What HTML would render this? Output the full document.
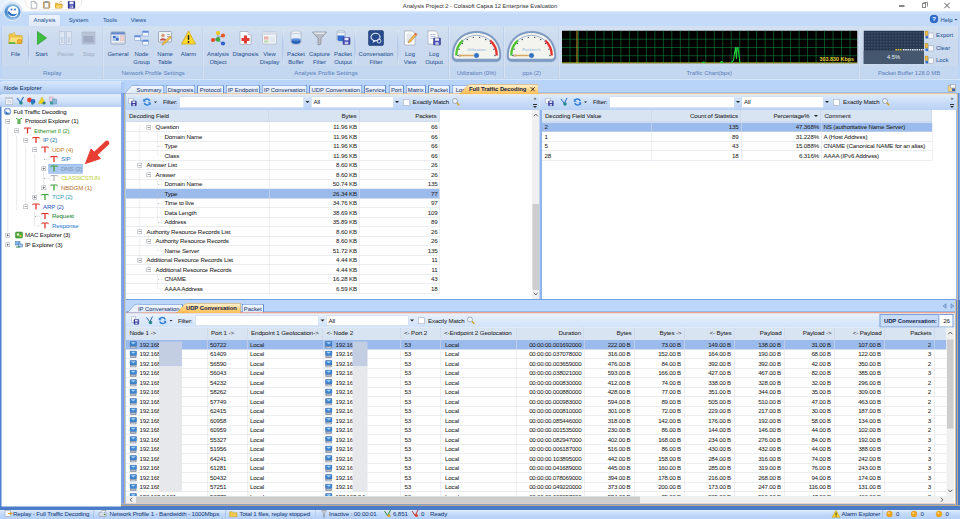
<!DOCTYPE html>
<html lang="en"><head><meta charset="utf-8"><title>Analysis Project 2 - Colasoft Capsa 12 Enterprise Evaluation</title>
<style>
html,body{margin:0;padding:0;background:#fff;}
body{width:960px;height:519px;overflow:hidden;position:relative;}
#app{position:absolute;left:0;top:0;width:1920px;height:1038px;transform:scale(.5);transform-origin:0 0;background:#bfdbff;overflow:hidden;
 font-family:"Liberation Sans",sans-serif;font-size:11.7px;color:#1e1e1e;-webkit-text-stroke:.08px;}
#app div,#app svg{position:absolute;box-sizing:border-box;}
.t{white-space:nowrap;overflow:visible;font-size:12.3px;letter-spacing:-.28px;}
.c{text-align:center;}
.r{text-align:right;}
.b{font-weight:bold;}
.rl{color:#2a5596;text-align:center;font-size:11.8px;letter-spacing:0;}
.gl{color:#5d84bd;text-align:center;font-size:11.8px;letter-spacing:0;}
.grp{border:1px solid #a9c3e6;border-radius:5px;background:linear-gradient(#dbe7f6 0%,#cfdff2 22%,#c6d8ef 60%,#cbdcf1 100%);overflow:hidden;}
.grp .lab{left:0;right:0;bottom:0;height:26px;background:#c0d5f0;}
.vsep{width:2px;background:linear-gradient(rgba(160,188,226,0),#9fbbe2 40%,#9fbbe2 70%,rgba(160,188,226,0));border-right:1px solid rgba(255,255,255,.7);}
.hdr{background:#d9e4f3;border-bottom:1px solid #c4d2e6;}
.hc{border-right:1px solid #c3d0e4;color:#1e1e1e;font-size:12.4px;letter-spacing:-.2px;}
.row{border-bottom:1px solid #d6dae1;}
.sel{background:#9bbbec;}
.n{letter-spacing:-.45px;}
.tb{background:linear-gradient(#dfebfa,#c7dbf7 55%,#b9d2f5);}
.inp{background:#fff;border:1px solid #b5cbe8;}
.dtab{font-size:11.7px;border:2px solid #5f8bd0;border-bottom:none;border-radius:4px 4px 0 0;background:linear-gradient(#f4f8fd,#dbe7f7);color:#1f3f78;text-align:center;white-space:nowrap;}
.atab{border:1px solid #e0a040;border-bottom:none;border-radius:4px 4px 0 0;background:linear-gradient(#fff3d6,#ffd58a 50%,#ffbf55);color:#1a2d55;font-weight:bold;white-space:nowrap;}
.tr{white-space:nowrap;}
.exp{width:9px;height:9px;border:1px solid #9aa0a8;background:#fff;}
.exp:before{content:"";position:absolute;left:1px;top:3px;width:5px;height:1px;background:#444;}
.exp.p:after{content:"";position:absolute;left:3px;top:1px;width:1px;height:5px;background:#444;}
.sb{background:#f0f0f0;}
.th{background:#cdcdcd;}
.st{color:#1b3f7c;white-space:nowrap;}
</style></head>
<body>
<div id="app">

<!-- title bar -->
<div style="left:0px;top:0px;width:1920px;height:23px;background:#fff;"></div>
<div style="left:0px;top:0px;width:56px;height:23px;background:linear-gradient(90deg,#e4eefb,#fff);"></div>
<div class="t" style="left:660px;top:0px;width:600px;height:25px;line-height:25px;text-align:center;color:#3a3a3a;font-size:11.5px;letter-spacing:0;">Analysis Project 2 - Colasoft Capsa 12 Enterprise Evaluation</div>
<div style="left:1798px;top:11px;width:11px;height:2px;background:#111;"></div>
<div style="left:1844px;top:7px;width:8px;height:8px;border:1.5px solid #111;"></div>
<div style="left:1847px;top:5px;width:8px;height:8px;border:1.5px solid #111;border-left:none;border-bottom:none;"></div>
<svg style="left:1887px;top:4px" width="14" height="14" viewBox="0 0 14 14"><path d="M1.5 1.5L12.5 12.5M12.5 1.5L1.5 12.5" stroke="#333" stroke-width="1.6" fill="none"/></svg>
<div style="left:50px;top:-14px;width:114px;height:34px;border:1px solid #d9d2c6;border-radius:0 0 18px 18px;background:#fff;"></div>
<svg style="left:60px;top:1px" width="16" height="17" viewBox="0 0 16 17"><path d="M2.5 1.5h7l4 4v10h-11z" fill="#fff" stroke="#7d8794" stroke-width="1.2"/><path d="M9.5 1.5v4h4" fill="#dfe5ee" stroke="#7d8794" stroke-width="1"/></svg>
<svg style="left:85px;top:1px" width="17" height="17" viewBox="0 0 17 17"><rect x="1.5" y="2.5" width="13" height="13" rx="1.5" fill="#d9a95e" stroke="#9a6a2a"/><rect x="4" y="4.5" width="8" height="10" fill="#fff" stroke="#8c97a6" stroke-width=".8"/><rect x="5.5" y="1" width="5" height="3.5" rx="1" fill="#8a95a8"/></svg>
<svg style="left:109px;top:1px" width="17" height="17" viewBox="0 0 17 17"><path d="M1.5 5.5h5l1.5 1.5h7v8h-13.5z" fill="#f0c040" stroke="#b8860b"/><path d="M3 9h12.5l-1.5 6h-12.5z" fill="#ffd969" stroke="#c89a20" stroke-width=".8"/><path d="M10 4c1.500-2.500 4-2.500 5-.5" stroke="#c07020" fill="none" stroke-width="1.2"/></svg>
<svg style="left:135px;top:1px" width="16" height="17" viewBox="0 0 16 17"><rect x="1" y="1.500" width="14" height="14" rx="1" fill="#3a3ca8" stroke="#23246e"/><rect x="4" y="2" width="8" height="5.500" fill="#e8ecf8"/><rect x="4.500" y="10" width="7" height="5.500" fill="#c8cce8"/><rect x="6" y="11" width="2" height="3.500" fill="#3a3ca8"/></svg>
<!-- ribbon tabs -->
<div style="left:0px;top:23px;width:1920px;height:30px;background:linear-gradient(#d4e4fa 0,#c3dbf9 20%);"></div>
<div style="left:0px;top:52px;width:1920px;height:112px;background:linear-gradient(#c3daf9,#b9d4f9);"></div>
<div style="left:0px;top:157px;width:1920px;height:3px;background:#d6e6f9;"></div>
<div style="left:57px;top:28px;width:64px;height:26px;border:1px solid #9dbde8;border-bottom:none;border-radius:4px 4px 0 0;background:linear-gradient(#eef4fc,#dde8f7);"></div>
<div class="t" style="left:57px;top:28px;width:64px;height:24px;line-height:24px;text-align:center;color:#2a5596;font-size:11.8px;letter-spacing:0;">Analysis</div>
<div class="t" style="left:125px;top:28px;width:64px;height:24px;line-height:24px;text-align:center;color:#2a5596;font-size:11.8px;letter-spacing:0;">System</div>
<div class="t" style="left:190px;top:28px;width:60px;height:24px;line-height:24px;text-align:center;color:#2a5596;font-size:11.8px;letter-spacing:0;">Tools</div>
<div class="t" style="left:247px;top:28px;width:60px;height:24px;line-height:24px;text-align:center;color:#2a5596;font-size:11.8px;letter-spacing:0;">Views</div>
<svg style="left:3px;top:2px" width="44" height="44" viewBox="0 0 44 44"><defs><linearGradient id="lg1" x1="0" y1="0" x2="0" y2="1"><stop offset="0" stop-color="#8fc0e8"/><stop offset=".5" stop-color="#3f86c8"/><stop offset="1" stop-color="#9cc4ea"/></linearGradient></defs><circle cx="22" cy="22" r="19" fill="#dfeaf8" stroke="#c3d6ee" stroke-width="1.500"/><circle cx="22" cy="22" r="16" fill="url(#lg1)"/><circle cx="23" cy="21" r="11" fill="#fff"/><path d="M12 21a10.500 10.500 0 0 0 20 3a9 7 0 0 1-14 0a5 5 0 0 0-6-3z" fill="#2d6fc0"/><circle cx="20" cy="17" r="2" fill="#2d6fc0"/><circle cx="27" cy="17" r="2" fill="#2d6fc0"/></svg>
<svg style="left:1859px;top:29px" width="18" height="18" viewBox="0 0 18 18"><circle cx="9" cy="9" r="8" fill="#2f6fd0" stroke="#1b4a9c"/><text x="9" y="13.500" font-size="12" font-weight="bold" text-anchor="middle" fill="#fff" font-family="Liberation Sans,sans-serif">?</text></svg>
<div class="t" style="left:1881px;top:28px;width:30px;height:22px;line-height:22px;color:#2a5596;font-size:11.8px;letter-spacing:0;">Help</div>
<div style="left:1909px;top:38px;width:0px;height:0px;border:3px solid transparent;border-top:3px solid #1f4587;"></div>
<!-- ribbon groups -->
<div style="left:2px;top:52px;width:1916px;height:106px;background:linear-gradient(#d3e0f1 0%,#cbdaee 30%,#c9d9ee 100%);border:1px solid #b3cbea;border-top:none;border-radius:0 0 4px 4px;"></div>
<div style="left:3px;top:132px;width:1914px;height:25px;background:#c4d7f1;"></div>
<div class="t gl" style="left:4px;top:132px;width:201px;height:26px;line-height:26px;">Replay</div>
<div class="t gl" style="left:208px;top:132px;width:197px;height:26px;line-height:26px;">Network Profile Settings</div>
<div class="t gl" style="left:408px;top:132px;width:488px;height:26px;line-height:26px;">Analysis Profile Settings</div>
<div class="t gl" style="left:900px;top:132px;width:106px;height:26px;line-height:26px;">Utilization (0%)</div>
<div class="t gl" style="left:1010px;top:132px;width:107px;height:26px;line-height:26px;">pps (2)</div>
<div class="t gl" style="left:1120px;top:132px;width:597px;height:26px;line-height:26px;">Traffic Chart(bps)</div>
<div class="t gl" style="left:1720px;top:132px;width:196px;height:26px;line-height:26px;">Packet Buffer 128.0 MB</div>
<div style="left:205px;top:54px;width:3px;height:103px;background:#bdd0ea;border-right:1.5px solid #e9f0fa;"></div>
<div style="left:405px;top:54px;width:3px;height:103px;background:#bdd0ea;border-right:1.5px solid #e9f0fa;"></div>
<div style="left:896px;top:54px;width:3px;height:103px;background:#bdd0ea;border-right:1.5px solid #e9f0fa;"></div>
<div style="left:1006px;top:54px;width:3px;height:103px;background:#bdd0ea;border-right:1.5px solid #e9f0fa;"></div>
<div style="left:1117px;top:54px;width:3px;height:103px;background:#bdd0ea;border-right:1.5px solid #e9f0fa;"></div>
<div style="left:1717px;top:54px;width:3px;height:103px;background:#bdd0ea;border-right:1.5px solid #e9f0fa;"></div>
<div class="vsep" style="left:56px;top:60px;width:3px;height:68px;"></div>
<div class="vsep" style="left:565px;top:60px;width:3px;height:68px;"></div>
<div class="vsep" style="left:709px;top:60px;width:3px;height:68px;"></div>
<div class="vsep" style="left:795px;top:60px;width:3px;height:68px;"></div>
<div class="t rl" style="left:-9px;top:99px;width:80px;height:17px;line-height:17px;">File</div>
<div class="t rl" style="left:43px;top:99px;width:80px;height:17px;line-height:17px;">Start</div>
<div class="t rl" style="left:91px;top:99px;width:80px;height:17px;line-height:17px;color:#9fb0c8;">Pause</div>
<div class="t rl" style="left:137px;top:99px;width:80px;height:17px;line-height:17px;color:#9fb0c8;">Stop</div>
<div class="t rl" style="left:196px;top:99px;width:80px;height:17px;line-height:17px;">General</div>
<div class="t rl" style="left:243px;top:99px;width:80px;height:17px;line-height:17px;">Node</div>
<div class="t rl" style="left:243px;top:115px;width:80px;height:17px;line-height:17px;">Group</div>
<div class="t rl" style="left:290px;top:99px;width:80px;height:17px;line-height:17px;">Name</div>
<div class="t rl" style="left:290px;top:115px;width:80px;height:17px;line-height:17px;">Table</div>
<div class="t rl" style="left:337px;top:99px;width:80px;height:17px;line-height:17px;">Alarm</div>
<div class="t rl" style="left:396px;top:99px;width:80px;height:17px;line-height:17px;">Analysis</div>
<div class="t rl" style="left:396px;top:115px;width:80px;height:17px;line-height:17px;">Object</div>
<div class="t rl" style="left:451px;top:99px;width:80px;height:17px;line-height:17px;">Diagnosis</div>
<div class="t rl" style="left:499px;top:99px;width:80px;height:17px;line-height:17px;">View</div>
<div class="t rl" style="left:499px;top:115px;width:80px;height:17px;line-height:17px;">Display</div>
<div class="t rl" style="left:552px;top:99px;width:80px;height:17px;line-height:17px;">Packet</div>
<div class="t rl" style="left:552px;top:115px;width:80px;height:17px;line-height:17px;">Buffer</div>
<div class="t rl" style="left:599px;top:99px;width:80px;height:17px;line-height:17px;">Capture</div>
<div class="t rl" style="left:599px;top:115px;width:80px;height:17px;line-height:17px;">Filter</div>
<div class="t rl" style="left:646px;top:99px;width:80px;height:17px;line-height:17px;">Packet</div>
<div class="t rl" style="left:646px;top:115px;width:80px;height:17px;line-height:17px;">Output</div>
<div class="t rl" style="left:712px;top:99px;width:80px;height:17px;line-height:17px;">Conversation</div>
<div class="t rl" style="left:712px;top:115px;width:80px;height:17px;line-height:17px;">Filter</div>
<div class="t rl" style="left:780px;top:99px;width:80px;height:17px;line-height:17px;">Log</div>
<div class="t rl" style="left:780px;top:115px;width:80px;height:17px;line-height:17px;">View</div>
<div class="t rl" style="left:828px;top:99px;width:80px;height:17px;line-height:17px;">Log</div>
<div class="t rl" style="left:828px;top:115px;width:80px;height:17px;line-height:17px;">Output</div>
<svg style="left:15px;top:60px" width="32" height="32" viewBox="0 0 32 32"><path d="M3 8h10l3 3h13v16h-26z" fill="#f2c84b" stroke="#c79a22"/><path d="M5 14h25l-3 13h-25z" fill="#ffdf7a" stroke="#d2a52c"/><circle cx="24" cy="23" r="4.500" fill="#f0b030" stroke="#b87c10"/><rect x="2" y="24" width="14" height="4" rx="2" fill="#6fb24a"/><path d="M10 9l3-5 4 7" fill="#f6d878" stroke="#c79a22" stroke-width=".8"/></svg>
<svg style="left:67px;top:60px" width="32" height="32" viewBox="0 0 32 32"><path d="M8 3l18 13-18 13z" fill="#3fbf3f" stroke="#2a9a2f" stroke-width="1.500" stroke-linejoin="round"/></svg>
<svg style="left:115px;top:60px" width="32" height="32" viewBox="0 0 32 32"><rect x="4" y="3" width="10" height="26" fill="#dfe7f3" stroke="#a9b7cd"/><rect x="18" y="3" width="10" height="26" fill="#dfe7f3" stroke="#a9b7cd"/><rect x="6.500" y="14" width="5" height="12" fill="#c5d1e4"/><rect x="20.500" y="14" width="5" height="12" fill="#c5d1e4"/></svg>
<svg style="left:161px;top:60px" width="32" height="32" viewBox="0 0 32 32"><rect x="3" y="4" width="26" height="24" fill="#b9c4d6" stroke="#a3b0c6"/><rect x="6" y="12" width="20" height="13" fill="#9eabc2"/></svg>
<svg style="left:220px;top:60px" width="32" height="32" viewBox="0 0 32 32"><rect x="2" y="4" width="28" height="24" rx="1.500" fill="#f4f7fb" stroke="#7d8da8" stroke-width="1.500"/><rect x="2.500" y="4.500" width="27" height="4.500" fill="#5f86c8"/><rect x="5" y="11" width="13" height="11" fill="#a9c6ee"/><rect x="6" y="12" width="5" height="4" fill="#3a6ac0"/><rect x="12" y="16" width="5" height="5" fill="#3a6ac0"/><rect x="20" y="11" width="8" height="11" fill="#ecd2d2" stroke="#c8a8a8" stroke-width=".600"/><path d="M5 25h23" stroke="#c3ccda" stroke-width="1.500"/></svg>
<svg style="left:267px;top:60px" width="32" height="32" viewBox="0 0 32 32"><path d="M9 16l11-9M9 17l11 8" stroke="#5f8ad0" stroke-width="1.600" fill="none"/><rect x="18" y="2" width="12" height="10" rx="1" fill="#f4f8fd" stroke="#6f93cc"/><rect x="18" y="2" width="12" height="3.500" fill="#5f8ad8"/><rect x="2" y="11" width="12" height="10" rx="1" fill="#f4f8fd" stroke="#6f93cc"/><rect x="2" y="11" width="12" height="3.500" fill="#5f8ad8"/><rect x="18" y="20" width="12" height="10" rx="1" fill="#f4f8fd" stroke="#6f93cc"/><rect x="18" y="20" width="12" height="3.500" fill="#5f8ad8"/></svg>
<svg style="left:314px;top:60px" width="32" height="32" viewBox="0 0 32 32"><rect x="3" y="3" width="26" height="21" rx="2" fill="#eef1f6" stroke="#8d97a8" stroke-width="1.500"/><circle cx="12" cy="11" r="3.500" fill="#d99a6c"/><path d="M6 21c0-6 12-6 12 0z" fill="#c0504d"/><path d="M20 9h6M20 13h6" stroke="#9aa5b8" stroke-width="1.500"/><path d="M26 12l3 3-14 13-5 2 2-5z" fill="#f2c14e" stroke="#a7782a" stroke-width=".9"/></svg>
<svg style="left:361px;top:60px" width="32" height="32" viewBox="0 0 32 32"><path d="M16 2l14 26h-28z" fill="#ffd92e" stroke="#c9a00c" stroke-width="1.500" stroke-linejoin="round"/><rect x="14.500" y="10" width="3" height="10" rx="1.500" fill="#222"/><circle cx="16" cy="24" r="1.900" fill="#222"/></svg>
<svg style="left:420px;top:60px" width="32" height="32" viewBox="0 0 32 32"><path d="M16 6L16 20M26 11L6 20M16 20L26 27M6 20L16 20" stroke="#6f7f96" stroke-width="1.600" fill="none"/><circle cx="16" cy="6" r="4.200" fill="#f2c81e"/><circle cx="26" cy="11" r="4.200" fill="#e8562a"/><circle cx="6" cy="20" r="4.200" fill="#e84a2a"/><circle cx="16" cy="19" r="4.400" fill="#3aa83a"/><circle cx="26" cy="27" r="4.200" fill="#2f5fc8"/></svg>
<svg style="left:475px;top:60px" width="32" height="32" viewBox="0 0 32 32"><path d="M5 3h16l6 6v20h-22z" fill="#fbfcfe" stroke="#9aa3b2" stroke-width="1.300"/><path d="M21 3v6h6" fill="#e4e9f1" stroke="#9aa3b2"/><path d="M13 11h6v5h5v6h-5v5h-6v-5h-5v-6h5z" fill="#e03a34"/></svg>
<svg style="left:523px;top:60px" width="32" height="32" viewBox="0 0 32 32"><rect x="2" y="4" width="28" height="24" rx="2.500" fill="#f4f6f9" stroke="#a7b0bf" stroke-width="1.300"/><rect x="2" y="4" width="28" height="6" rx="2" fill="#d9dfe8"/><rect x="5" y="13" width="9" height="6" fill="#e7b0a8"/><rect x="5" y="21" width="9" height="4" fill="#b8d8a8"/><rect x="16" y="13" width="11" height="12" fill="#e3e8ef"/></svg>
<svg style="left:576px;top:60px" width="32" height="32" viewBox="0 0 32 32"><path d="M6 4h20v20c0 6-20 6-20 0z" fill="#e9eef6" stroke="#9aa9c0" stroke-width="1.300"/><path d="M7 19h18v5c0 5-18 5-18 0z" fill="#2a62b8"/><ellipse cx="16" cy="19" rx="9" ry="2.500" fill="#5f95e0"/><ellipse cx="16" cy="4.500" rx="10" ry="2.500" fill="#f4f7fb" stroke="#9aa9c0"/></svg>
<svg style="left:623px;top:60px" width="32" height="32" viewBox="0 0 32 32"><path d="M2 4h28l-11 13v11l-6 2v-13z" fill="#b9bec6" stroke="#7d838d" stroke-width="1.300" stroke-linejoin="round"/><path d="M4 5h24l-3 3h-18z" fill="#e6e9ee"/></svg>
<svg style="left:670px;top:60px" width="32" height="32" viewBox="0 0 32 32"><path d="M4 3h16v16c0 5-16 5-16 0z" fill="#eef3fa" stroke="#8fa0b8" stroke-width="1.200"/><path d="M5 11h14v8c0 4-14 4-14 0z" fill="#2f6fd0"/><ellipse cx="12" cy="3.500" rx="8" ry="2" fill="#dfe6f1" stroke="#8fa0b8"/><rect x="16" y="15" width="14" height="14" rx="1" fill="#4a4fb8" stroke="#2b2f7a"/><rect x="19" y="15.500" width="8" height="5" fill="#e8ecf8"/><rect x="19.500" y="23.500" width="7" height="5" fill="#c8cce8"/></svg>
<svg style="left:736px;top:60px" width="32" height="32" viewBox="0 0 32 32"><rect x="1" y="1" width="30" height="30" rx="3" fill="#274a8c" stroke="#1a3366"/><ellipse cx="15" cy="14" rx="9" ry="7.500" fill="none" stroke="#e8eef9" stroke-width="2.200"/><path d="M11 20l-2 6 7-4" fill="#e8eef9"/><circle cx="22" cy="22" r="4" fill="none" stroke="#e8eef9" stroke-width="1.800"/></svg>
<svg style="left:804px;top:60px" width="32" height="32" viewBox="0 0 32 32"><path d="M5 2h16l5 5v23h-21z" fill="#fbfcfe" stroke="#9aa3b2" stroke-width="1.300"/><path d="M9 10h12M9 14h12M9 18h8M9 22h10" stroke="#b3bccb" stroke-width="1.300"/><path d="M27 6l3 3-13 15-5 2 2-5z" fill="#f2b84e" stroke="#a7682a" stroke-width=".9"/><path d="M27 6l3 3-2 2-3-3z" fill="#e05a4a"/></svg>
<svg style="left:852px;top:60px" width="32" height="32" viewBox="0 0 32 32"><path d="M4 2h15l5 5v21h-20z" fill="#fbfcfe" stroke="#9aa3b2" stroke-width="1.300"/><path d="M8 9h11M8 13h11M8 17h7" stroke="#93a7c9" stroke-width="1.300"/><rect x="15" y="16" width="14" height="14" rx="1" fill="#4a4fb8" stroke="#2b2f7a"/><rect x="18" y="16.500" width="8" height="5" fill="#e8ecf8"/><rect x="18.500" y="24.500" width="7" height="5" fill="#c8cce8"/></svg>
<svg style="left:903px;top:61px" width="100" height="64" viewBox="0 0 100 64">
<path d="M1 52C1 20 22 1.500 50 1.500S99 20 99 52C99 58 95 62.500 88 62.500H12C5 62.500 1 58 1 52z" fill="#7f9cc4" stroke="#6f8cb6" stroke-width=".800"/>
<path d="M4.500 51C4.500 23 24 5 50 5S95.500 23 95.500 51C95.500 54.500 93.500 56.500 90 56.500H10C6.500 56.500 4.500 54.500 4.500 51z" fill="#f4f4ee"/>
<path d="M9.5 50.0A40.500 40.500 0 0 1 22.9 19.9" stroke="#4cc42e" stroke-width="4.500" fill="none"/>
<path d="M77.1 19.9A40.500 40.500 0 0 1 90.5 50.0" stroke="#e6302c" stroke-width="4.500" fill="none"/>
<path d="M21 22A40 40 0 0 1 79 22" stroke="#7f9cc4" stroke-width="1.500" fill="none"/>
<circle cx="87.0" cy="50.0" r="1.300" fill="#2a3550"/><circle cx="84.8" cy="37.3" r="1.300" fill="#2a3550"/><circle cx="78.3" cy="26.2" r="1.300" fill="#2a3550"/><circle cx="68.5" cy="18.0" r="1.300" fill="#2a3550"/><circle cx="56.4" cy="13.6" r="1.300" fill="#2a3550"/><circle cx="43.6" cy="13.6" r="1.300" fill="#2a3550"/><circle cx="31.5" cy="18.0" r="1.300" fill="#2a3550"/><circle cx="21.7" cy="26.2" r="1.300" fill="#2a3550"/><circle cx="15.2" cy="37.3" r="1.300" fill="#2a3550"/><circle cx="13.0" cy="50.0" r="1.300" fill="#2a3550"/>
<text x="50" y="41" font-size="8.500" text-anchor="middle" fill="#8fb0dc" font-family="Liberation Sans,sans-serif">Utilization</text>
<text x="15" y="53" font-size="6" fill="#556" font-family="Liberation Sans,sans-serif">0</text>
<path d="M16 50H48" stroke="#d9a860" stroke-width="3"/>
<circle cx="50" cy="50" r="5.600" fill="#f4f4ee"/><circle cx="50" cy="50" r="4.600" fill="#2f74c8" stroke="#2560ac" stroke-width=".800"/>
</svg>
<svg style="left:1013px;top:61px" width="100" height="64" viewBox="0 0 100 64">
<path d="M1 52C1 20 22 1.500 50 1.500S99 20 99 52C99 58 95 62.500 88 62.500H12C5 62.500 1 58 1 52z" fill="#7f9cc4" stroke="#6f8cb6" stroke-width=".800"/>
<path d="M4.500 51C4.500 23 24 5 50 5S95.500 23 95.500 51C95.500 54.500 93.500 56.500 90 56.500H10C6.500 56.500 4.500 54.500 4.500 51z" fill="#f4f4ee"/>
<path d="M9.5 50.0A40.500 40.500 0 0 1 22.9 19.9" stroke="#4cc42e" stroke-width="4.500" fill="none"/>
<path d="M77.1 19.9A40.500 40.500 0 0 1 90.5 50.0" stroke="#e6302c" stroke-width="4.500" fill="none"/>
<path d="M21 22A40 40 0 0 1 79 22" stroke="#7f9cc4" stroke-width="1.500" fill="none"/>
<circle cx="87.0" cy="50.0" r="1.300" fill="#2a3550"/><circle cx="84.8" cy="37.3" r="1.300" fill="#2a3550"/><circle cx="78.3" cy="26.2" r="1.300" fill="#2a3550"/><circle cx="68.5" cy="18.0" r="1.300" fill="#2a3550"/><circle cx="56.4" cy="13.6" r="1.300" fill="#2a3550"/><circle cx="43.6" cy="13.6" r="1.300" fill="#2a3550"/><circle cx="31.5" cy="18.0" r="1.300" fill="#2a3550"/><circle cx="21.7" cy="26.2" r="1.300" fill="#2a3550"/><circle cx="15.2" cy="37.3" r="1.300" fill="#2a3550"/><circle cx="13.0" cy="50.0" r="1.300" fill="#2a3550"/>
<text x="50" y="41" font-size="8.500" text-anchor="middle" fill="#8fb0dc" font-family="Liberation Sans,sans-serif">Packets/s</text>
<text x="15" y="53" font-size="6" fill="#556" font-family="Liberation Sans,sans-serif">0</text>
<path d="M16 50H48" stroke="#d9a860" stroke-width="3"/>
<circle cx="50" cy="50" r="5.600" fill="#f4f4ee"/><circle cx="50" cy="50" r="4.600" fill="#2f74c8" stroke="#2560ac" stroke-width=".800"/>
</svg>
<svg style="left:1124px;top:61px" width="591" height="66" viewBox="0 0 591 66"><rect width="591" height="66" fill="#000"/><path d="M16.0 0V66M33.0 0V66M49.9 0V66M66.9 0V66M83.9 0V66M100.8 0V66M117.8 0V66M134.8 0V66M151.8 0V66M168.7 0V66M185.7 0V66M202.7 0V66M219.6 0V66M236.6 0V66M253.6 0V66M270.5 0V66M287.5 0V66M304.5 0V66M321.5 0V66M338.4 0V66M355.4 0V66M372.4 0V66M389.3 0V66M406.3 0V66M423.3 0V66M440.2 0V66M457.2 0V66M474.2 0V66M491.2 0V66M508.1 0V66M525.1 0V66M542.1 0V66M559.0 0V66M576.0 0V66M0 17.500H591M0 34H591M0 50.500H591" stroke="#0c7436" stroke-width="1.400" fill="none"/><path d="M30 0V66" stroke="#c9a227" stroke-width="2"/><path d="M0 65H591" stroke="#d8d82a" stroke-width="2"/><path d="M280 65l3-2 3 2M316 65l3-3 3 3M339 65l4-6 4-25 2 22 1-22 2 0 4 31" fill="none" stroke="#1fd03a" stroke-width="2.200" stroke-linejoin="round"/><text x="584" y="60" font-size="10.800" font-weight="bold" text-anchor="end" fill="#e8d23a" font-family="Liberation Sans,sans-serif">303.830 Kbps</text></svg>
<svg style="left:1727px;top:61px" width="121" height="67" viewBox="0 0 121 67"><defs><pattern id="dots" width="3" height="3" patternUnits="userSpaceOnUse"><rect width="3" height="3" fill="#24344c"/><rect width="1.500" height="1.500" fill="#475b7a"/></pattern></defs><rect width="121" height="67" fill="url(#dots)"/><rect y="40" width="121" height="27" fill="#45566f"/><path d="M64 38.500H78" stroke="#e8d030" stroke-width="3" stroke-dasharray="3 1.500"/><path d="M79 38.500H121" stroke="#e8ecf2" stroke-width="3" stroke-dasharray="3 1.500"/><text x="60" y="57" font-size="11.500" text-anchor="middle" fill="#f0f3f8" font-family="Liberation Sans,sans-serif">4.5%</text></svg>
<svg style="left:1849px;top:61px" width="20" height="18" viewBox="0 0 20 18"><rect x="1" y="1" width="6" height="9" fill="#e8b84a" stroke="#a07820" stroke-width=".8"/><rect x="8" y="5" width="10" height="11" fill="#f4f6fa" stroke="#8c99b0" stroke-width=".9"/><rect x="2" y="11" width="5" height="5" fill="#3a6fc8"/></svg>
<div class="t" style="left:1872px;top:61px;width:44px;height:18px;line-height:18px;color:#2a5596;font-size:11.800px;letter-spacing:0;">Export</div>
<svg style="left:1849px;top:86px" width="20" height="18" viewBox="0 0 20 18"><rect x="1" y="1" width="6" height="9" fill="#e8b84a" stroke="#a07820" stroke-width=".8"/><rect x="8" y="5" width="10" height="11" fill="#f4f6fa" stroke="#8c99b0" stroke-width=".9"/><rect x="2" y="11" width="5" height="5" fill="#3a6fc8"/></svg>
<div class="t" style="left:1872px;top:86px;width:44px;height:18px;line-height:18px;color:#2a5596;font-size:11.800px;letter-spacing:0;">Clear</div>
<svg style="left:1849px;top:111px" width="20" height="18" viewBox="0 0 20 18"><rect x="1" y="1" width="6" height="9" fill="#e8b84a" stroke="#a07820" stroke-width=".8"/><rect x="8" y="5" width="10" height="11" fill="#f4f6fa" stroke="#8c99b0" stroke-width=".9"/><rect x="2" y="11" width="5" height="5" fill="#3a6fc8"/></svg>
<div class="t" style="left:1872px;top:111px;width:44px;height:18px;line-height:18px;color:#2a5596;font-size:11.800px;letter-spacing:0;">Lock</div>
<!-- node explorer -->
<div style="left:0px;top:163px;width:243px;height:851px;background:#fff;border-left:3px solid #4a80d0;"></div>
<div style="left:0px;top:163px;width:243px;height:26px;background:linear-gradient(#d6e5fa,#c3d9f7 50%,#a9c6f0);border-bottom:1px solid #9dbbe6;"></div>
<div class="t" style="left:8px;top:164px;width:200px;height:24px;line-height:24px;color:#15315f;font-size:11.8px;letter-spacing:0;">Node Explorer</div>
<div style="left:0px;top:189px;width:243px;height:25px;background:linear-gradient(#e6effb,#cfe0f8 60%,#b7d0f4);border-bottom:1px solid #9fbde8;"></div>
<svg style="left:8px;top:192px" width="116" height="20" viewBox="0 0 116 20"><g transform="translate(2,0)"><rect x="1.500" y="2.500" width="14" height="14" fill="#eef1f6" stroke="#a3adbd"/><rect x="1.500" y="2.500" width="14" height="3.500" fill="#c2cad8"/><path d="M5 9h4M5 12h4M11 9v5" stroke="#b5bece" stroke-width="1.200"/></g><g transform="translate(25,0)"><path d="M1 4l7 9M14 2l-7 12" stroke="#2a66b8" stroke-width="2.200" fill="none"/><circle cx="9" cy="14" r="3.500" fill="#1f8a8a"/></g><g transform="translate(46,0)"><circle cx="5" cy="8" r="4.800" fill="#e8452c"/><circle cx="12" cy="11" r="4.800" fill="#2f6fc8"/><circle cx="11" cy="15" r="2.500" fill="#2a8a9a"/></g><g transform="translate(68,0)"><path d="M8 2l7 13h-14z" fill="#f4d820" stroke="#c0a010" stroke-width=".800"/><circle cx="12" cy="14" r="3.200" fill="#3a8a6a"/><circle cx="13" cy="13" r="1.500" fill="#2f6fc8"/></g><g transform="translate(90,0)"><rect x="1" y="2" width="8" height="9" fill="#f0d0dc" stroke="#b090a0" stroke-width=".800"/><rect x="7" y="6" width="8" height="10" fill="#8fb8d8" stroke="#4a7fa8" stroke-width=".800"/><rect x="2" y="11" width="6" height="6" fill="#3a9a9a"/></g></svg>
<div style="left:15px;top:252px;width:1px;height:220px;border-left:1px dotted #a8a8a8;"></div>
<div style="left:33px;top:270px;width:1px;height:150px;border-left:1px dotted #a8a8a8;"></div>
<div style="left:51px;top:289px;width:1px;height:122px;border-left:1px dotted #a8a8a8;"></div>
<div style="left:69px;top:308px;width:1px;height:85px;border-left:1px dotted #a8a8a8;"></div>
<div style="left:87px;top:327px;width:1px;height:50px;border-left:1px dotted #a8a8a8;"></div>
<div style="left:69px;top:422px;width:1px;height:30px;border-left:1px dotted #a8a8a8;"></div>
<svg style="left:7px;top:215px" width="16" height="16" viewBox="0 0 16 16"><circle cx="8" cy="8" r="6.800" fill="#a9c6ec" stroke="#4f7fc0" stroke-width="1.300"/><circle cx="8" cy="8" r="4.500" fill="#fff"/><path d="M4.500 7a4 4 0 1 0 7 2.500a3 3 0 0 1-5-.5z" fill="#2d6fc0"/></svg>
<div class="t tr" style="left:27px;top:214px;width:150px;height:18px;line-height:18px;color:#1e1e1e;">Full Traffic Decoding</div>
<div class="exp" style="left:11px;top:238px;width:9px;height:9px;"></div>
<svg style="left:30px;top:234px" width="16" height="16" viewBox="0 0 16 16"><path d="M2 3h3M11 3h3" stroke="#3ea03a" stroke-width="2"/><rect x="5" y="4" width="6" height="10" fill="#3ea03a"/><path d="M8 4v10" stroke="#d8f0d0" stroke-width="1"/></svg>
<div class="t tr" style="left:50px;top:233px;width:150px;height:18px;line-height:18px;color:#1e1e1e;">Protocol Explorer (1)</div>
<div class="exp" style="left:29px;top:257px;width:9px;height:9px;"></div>
<svg style="left:47px;top:253px" width="16" height="16" viewBox="0 0 16 16"><path d="M1.500 3h13" stroke="#e0332c" stroke-width="2.200"/><path d="M1.500 3v2.500M14.500 3v2.500" stroke="#e0332c" stroke-width="1.400"/><path d="M8 3v11" stroke="#e0332c" stroke-width="2.600" fill="none"/></svg>
<div class="t tr" style="left:68px;top:252px;width:150px;height:18px;line-height:18px;color:#3f9a34;">Ethernet II (2)</div>
<div class="exp" style="left:47px;top:276px;width:9px;height:9px;"></div>
<svg style="left:64px;top:272px" width="16" height="16" viewBox="0 0 16 16"><path d="M1.500 3h13" stroke="#e0332c" stroke-width="2.200"/><path d="M1.500 3v2.500M14.500 3v2.500" stroke="#e0332c" stroke-width="1.400"/><path d="M8 3v11" stroke="#e0332c" stroke-width="2.600" fill="none"/></svg>
<div class="t tr" style="left:86px;top:271px;width:150px;height:18px;line-height:18px;color:#2f78b0;">IP (2)</div>
<div class="exp" style="left:65px;top:295px;width:9px;height:9px;"></div>
<svg style="left:82px;top:291px" width="16" height="16" viewBox="0 0 16 16"><path d="M1.500 3h13" stroke="#e0332c" stroke-width="2.200"/><path d="M1.500 3v2.500M14.500 3v2.500" stroke="#e0332c" stroke-width="1.400"/><path d="M8 3v11" stroke="#e0332c" stroke-width="2.600" fill="none"/></svg>
<div class="t tr" style="left:104px;top:290px;width:150px;height:18px;line-height:18px;color:#c58a3c;">UDP (4)</div>
<svg style="left:100px;top:310px" width="16" height="16" viewBox="0 0 16 16"><path d="M1.500 3h13" stroke="#e0332c" stroke-width="2.200"/><path d="M1.500 3v2.500M14.500 3v2.500" stroke="#e0332c" stroke-width="1.400"/><path d="M8 3v11" stroke="#e0332c" stroke-width="2.600" fill="none"/></svg>
<div class="t tr" style="left:122px;top:309px;width:150px;height:18px;line-height:18px;color:#2f7ec4;">SIP</div>
<div style="left:97px;top:328px;width:68px;height:19px;background:#a9c8f2;border:1px solid #8fb4ea;"></div>
<div class="exp p" style="left:83px;top:333px;width:9px;height:9px;"></div>
<svg style="left:100px;top:329px" width="16" height="16" viewBox="0 0 16 16"><path d="M1.500 3h13" stroke="#3ea03a" stroke-width="2.200"/><path d="M1.500 3v2.500M14.500 3v2.500" stroke="#3ea03a" stroke-width="1.400"/><path d="M8 3v11" stroke="#3ea03a" stroke-width="2.600" fill="none"/></svg>
<div class="t tr" style="left:122px;top:328px;width:150px;height:18px;line-height:18px;color:#7f93b0;">DNS (2)</div>
<svg style="left:100px;top:348px" width="16" height="16" viewBox="0 0 16 16"><path d="M1.500 3h13" stroke="#b5b9bf" stroke-width="2.200"/><path d="M1.500 3v2.500M14.500 3v2.500" stroke="#b5b9bf" stroke-width="1.400"/><path d="M8 3v11" stroke="#b5b9bf" stroke-width="2.600" fill="none"/></svg>
<div class="t tr" style="left:122px;top:347px;width:150px;height:18px;line-height:18px;color:#c3d646;letter-spacing:-.75px;">CLASSICSTUN</div>
<div class="exp p" style="left:83px;top:371px;width:9px;height:9px;"></div>
<svg style="left:100px;top:367px" width="16" height="16" viewBox="0 0 16 16"><path d="M1.500 3h13" stroke="#3ea03a" stroke-width="2.200"/><path d="M1.500 3v2.500M14.500 3v2.500" stroke="#3ea03a" stroke-width="1.400"/><path d="M8 3v11" stroke="#3ea03a" stroke-width="2.600" fill="none"/></svg>
<div class="t tr" style="left:122px;top:366px;width:150px;height:18px;line-height:18px;color:#b8763a;">NBDGM (1)</div>
<div class="exp p" style="left:65px;top:390px;width:9px;height:9px;"></div>
<svg style="left:82px;top:386px" width="16" height="16" viewBox="0 0 16 16"><path d="M1.500 3h13" stroke="#3ea03a" stroke-width="2.200"/><path d="M1.500 3v2.500M14.500 3v2.500" stroke="#3ea03a" stroke-width="1.400"/><path d="M8 3v11" stroke="#3ea03a" stroke-width="2.600" fill="none"/></svg>
<div class="t tr" style="left:104px;top:385px;width:150px;height:18px;line-height:18px;color:#3aa0b8;">TCP (2)</div>
<div class="exp" style="left:47px;top:409px;width:9px;height:9px;"></div>
<svg style="left:64px;top:405px" width="16" height="16" viewBox="0 0 16 16"><path d="M1.500 3h13" stroke="#e0332c" stroke-width="2.200"/><path d="M1.500 3v2.500M14.500 3v2.500" stroke="#e0332c" stroke-width="1.400"/><path d="M8 3v11" stroke="#e0332c" stroke-width="2.600" fill="none"/></svg>
<div class="t tr" style="left:86px;top:404px;width:150px;height:18px;line-height:18px;color:#3558c4;">ARP (2)</div>
<svg style="left:82px;top:424px" width="16" height="16" viewBox="0 0 16 16"><path d="M1.500 3h13" stroke="#e0332c" stroke-width="2.200"/><path d="M1.500 3v2.500M14.500 3v2.500" stroke="#e0332c" stroke-width="1.400"/><path d="M8 3v11" stroke="#e0332c" stroke-width="2.600" fill="none"/></svg>
<div class="t tr" style="left:104px;top:423px;width:150px;height:18px;line-height:18px;color:#2a8a3a;">Request</div>
<svg style="left:82px;top:443px" width="16" height="16" viewBox="0 0 16 16"><path d="M1.500 3h13" stroke="#e0332c" stroke-width="2.200"/><path d="M1.500 3v2.500M14.500 3v2.500" stroke="#e0332c" stroke-width="1.400"/><path d="M8 3v11" stroke="#e0332c" stroke-width="2.600" fill="none"/></svg>
<div class="t tr" style="left:104px;top:442px;width:150px;height:18px;line-height:18px;color:#3a84d6;">Response</div>
<div class="exp p" style="left:11px;top:466px;width:9px;height:9px;"></div>
<svg style="left:30px;top:462px" width="16" height="16" viewBox="0 0 16 16"><rect x="1" y="2" width="14" height="12" rx="2" fill="#4ea83a" stroke="#2f7a22"/><circle cx="6" cy="7" r="2.500" fill="#e8f6d8"/><circle cx="11" cy="10" r="2" fill="#f0d040"/></svg>
<div class="t tr" style="left:50px;top:461px;width:150px;height:18px;line-height:18px;color:#1e1e1e;">MAC Explorer (3)</div>
<div class="exp p" style="left:11px;top:485px;width:9px;height:9px;"></div>
<svg style="left:30px;top:481px" width="16" height="16" viewBox="0 0 16 16"><rect x="1" y="2" width="9" height="7" fill="#7fb2ea" stroke="#3f6fb0"/><rect x="7" y="7" width="8" height="6" fill="#a9c9ee" stroke="#3f6fb0"/><path d="M2 13h8" stroke="#3a8a4a" stroke-width="2"/></svg>
<div class="t tr" style="left:50px;top:480px;width:150px;height:18px;line-height:18px;color:#1e1e1e;">IP Explorer (3)</div>
<div style="left:88px;top:318px;width:12px;height:1px;border-top:1px dotted #a8a8a8;"></div>
<div style="left:88px;top:356px;width:12px;height:1px;border-top:1px dotted #a8a8a8;"></div>
<div style="left:70px;top:432px;width:12px;height:1px;border-top:1px dotted #a8a8a8;"></div>
<div style="left:70px;top:451px;width:12px;height:1px;border-top:1px dotted #a8a8a8;"></div>
<svg style="left:160px;top:276px" width="64" height="62" viewBox="0 0 64 62"><path d="M54 10L26 36" stroke="#e83f35" stroke-width="9.500" stroke-linecap="round"/><path d="M11 51l11-29 19 19z" fill="#e83f35" stroke="#e83f35" stroke-width="2" stroke-linejoin="round"/></svg>
<!-- document tabs -->
<div style="left:242px;top:164px;width:1678px;height:850px;background:#fff;"></div>
<div style="left:242px;top:164px;width:1678px;height:24px;background:#b9d4f9;"></div>
<div style="left:242px;top:164px;width:10px;height:24px;background:linear-gradient(90deg,#a9c6f5,#b9d4f9);"></div>
<div style="left:242px;top:186px;width:10px;height:828px;background:linear-gradient(90deg,#86adf0 0,#7297e4 55%,#c4b496 60%,#c4b496 78%,#a6cbf8 80%);"></div>
<div style="left:1912px;top:186px;width:8px;height:828px;background:linear-gradient(90deg,#98bcf2 0,#98bcf2 25%,#ccb692 28%,#ccb692 50%,#5f90d4 54%,#5f90d4 80%,#86aeea 84%);"></div>
<div style="left:252px;top:185px;width:1660px;height:4px;background:linear-gradient(#7aa4dc 0,#7aa4dc 45%,#ecc49a 50%);"></div>
<svg style="left:246px;top:169px" width="30" height="19" viewBox="0 0 30 19"><path d="M1 18.500C10 16 12 1 24 1H30V18.500z" fill="#eaf1fb" stroke="#5a84c6"/></svg>
<div class="dtab" style="left:262px;top:169px;width:67px;height:18px;line-height:18px;border-left:none;border-radius:0 4px 0 0;text-align:right;padding-right:4px;">Summary</div>
<div class="dtab" style="left:331px;top:169px;width:60px;height:18px;line-height:18px;">Diagnosis</div>
<div class="dtab" style="left:394px;top:169px;width:54px;height:18px;line-height:18px;">Protocol</div>
<div class="dtab" style="left:451px;top:169px;width:69px;height:18px;line-height:18px;">IP Endpoint</div>
<div class="dtab" style="left:523px;top:169px;width:92px;height:18px;line-height:18px;">IP Conversation</div>
<div class="dtab" style="left:618px;top:169px;width:107px;height:18px;line-height:18px;">UDP Conversation</div>
<div class="dtab" style="left:728px;top:169px;width:44px;height:18px;line-height:18px;">Service</div>
<div class="dtab" style="left:777px;top:169px;width:31px;height:18px;line-height:18px;">Port</div>
<div class="dtab" style="left:811px;top:169px;width:41px;height:18px;line-height:18px;">Matrix</div>
<div class="dtab" style="left:856px;top:169px;width:44px;height:18px;line-height:18px;">Packet</div>
<div class="dtab" style="left:903px;top:169px;width:37px;height:18px;line-height:18px;">Log</div>
<svg style="left:918px;top:168px" width="30" height="20" viewBox="0 0 30 20"><defs><linearGradient id="og" x1="0" y1="0" x2="0" y2="1"><stop offset="0" stop-color="#fff1cf"/><stop offset=".5" stop-color="#ffd27f"/><stop offset="1" stop-color="#ffb94a"/></linearGradient></defs><path d="M0 20C10 17 12 1 24 1H30V20z" fill="url(#og)" stroke="#e0a040"/></svg>
<div class="atab" style="left:944px;top:168px;width:133px;height:20px;border-left:none;border-radius:0 4px 0 0;"></div>
<div class="t" style="left:938px;top:169px;width:116px;height:18px;line-height:18px;color:#14284f;font-weight:bold;font-size:11.6px;letter-spacing:0;">Full Traffic Decoding</div>
<svg style="left:1060px;top:173px" width="11" height="11" viewBox="0 0 11 11"><path d="M1.500 1.500l8 8M9.500 1.500l-8 8" stroke="#222" stroke-width="1.800"/></svg>
<svg style="left:1895px;top:168px" width="18" height="17" viewBox="0 0 18 17"><rect x="1" y="3" width="15" height="12" fill="#f2d47a" stroke="#8c8f9c"/><rect x="6" y="1" width="10" height="7" fill="#f4f6fa" stroke="#8c8f9c"/><rect x="9" y="9" width="6" height="5" fill="#3a5fb8"/></svg>
<!-- top-left pane: decoding field tree -->
<div class="tb" style="left:252px;top:189px;width:827px;height:31px;"></div>
<svg style="left:256px;top:195px" width="18" height="18" viewBox="0 0 18 18"><rect x="1.500" y="1.500" width="9" height="11" fill="#f6f8fb" stroke="#9aa6ba"/><rect x="7" y="7" width="9.500" height="9.500" rx="1" fill="#3b3fa8" stroke="#25286e"/><rect x="9" y="7.500" width="5.500" height="3.500" fill="#e8ecf8"/><rect x="9.500" y="13" width="4.500" height="3.500" fill="#c8cce8"/></svg>
<svg style="left:285px;top:195px" width="18" height="18" viewBox="0 0 18 18"><path d="M14.500 7a6 6 0 0 0-11-1" stroke="#2f7fd6" stroke-width="3" fill="none"/><path d="M1.500 2.500v6h6z" fill="#2f7fd6"/><path d="M3.500 11a6 6 0 0 0 11 1" stroke="#2f7fd6" stroke-width="3" fill="none"/><path d="M16.500 15.500v-6h-6z" fill="#2f7fd6"/></svg>
<div style="left:308px;top:203px;width:0px;height:0px;border:3px solid transparent;border-top:3.500px solid #222;"></div>
<div class="t" style="left:326px;top:190px;width:40px;height:29px;line-height:29px;color:#1e1e1e;">Filter:</div>
<div class="inp" style="left:359px;top:193px;width:249px;height:23px;"></div>
<div style="left:611px;top:202px;width:0px;height:0px;border:4px solid transparent;border-top:4.500px solid #222;"></div>
<div class="inp" style="left:622px;top:193px;width:165px;height:23px;"></div>
<div class="t" style="left:627px;top:193px;width:40px;height:23px;line-height:23px;">All</div>
<div style="left:790px;top:202px;width:0px;height:0px;border:4px solid transparent;border-top:4.500px solid #222;"></div>
<div style="left:806px;top:198px;width:13px;height:13px;background:#fff;border:1px solid #8c9ab2;"></div>
<div class="t" style="left:825px;top:190px;width:90px;height:29px;line-height:29px;">Exactly Match</div>
<svg style="left:903px;top:195px" width="18" height="18" viewBox="0 0 18 18"><circle cx="7" cy="7" r="5" fill="#eef4fb" stroke="#8a96a8" stroke-width="1.500"/><path d="M11.500 11.500l3 3" stroke="#d8a020" stroke-width="3" stroke-linecap="round"/></svg>
<div class="t" style="left:1063px;top:190px;width:14px;height:12px;line-height:12px;font-size:9px;color:#333;text-align:center;letter-spacing:0;">»</div>
<div style="left:1066px;top:208px;width:8px;height:2px;background:#333;"></div>
<div style="left:1066px;top:212px;width:0px;height:0px;border:4px solid transparent;border-top:4px solid #333;"></div>
<div class="hdr" style="left:252px;top:220px;width:627px;height:24px;"></div>
<div class="t hc" style="left:252px;top:220px;width:286px;height:23px;line-height:23px;padding-left:6px;">Decoding Field</div>
<div class="t hc r" style="left:538px;top:220px;width:181px;height:23px;line-height:23px;padding-right:5px;">Bytes</div>
<div class="t hc r" style="left:719px;top:220px;width:160px;height:23px;line-height:23px;padding-right:5px;">Packets</div>
<div class="row" style="left:252px;top:245px;width:627px;height:19px;"></div>
<div class="exp" style="left:293px;top:250px;width:9px;height:9px;"></div>
<div class="t" style="left:311px;top:245px;width:240px;height:18px;line-height:18px;">Question</div>
<div class="t r" style="left:538px;top:245px;width:176px;height:18px;line-height:18px;">11.96 KB</div>
<div class="t r" style="left:719px;top:245px;width:156px;height:18px;line-height:18px;">66</div>
<div class="row" style="left:252px;top:264px;width:627px;height:19px;"></div>
<div class="t" style="left:329px;top:264px;width:240px;height:18px;line-height:18px;">Domain Name</div>
<div class="t r" style="left:538px;top:264px;width:176px;height:18px;line-height:18px;">11.96 KB</div>
<div class="t r" style="left:719px;top:264px;width:156px;height:18px;line-height:18px;">66</div>
<div class="row" style="left:252px;top:283px;width:627px;height:19px;"></div>
<div class="t" style="left:329px;top:283px;width:240px;height:18px;line-height:18px;">Type</div>
<div class="t r" style="left:538px;top:283px;width:176px;height:18px;line-height:18px;">11.96 KB</div>
<div class="t r" style="left:719px;top:283px;width:156px;height:18px;line-height:18px;">66</div>
<div class="row" style="left:252px;top:302px;width:627px;height:19px;"></div>
<div class="t" style="left:329px;top:302px;width:240px;height:18px;line-height:18px;">Class</div>
<div class="t r" style="left:538px;top:302px;width:176px;height:18px;line-height:18px;">11.96 KB</div>
<div class="t r" style="left:719px;top:302px;width:156px;height:18px;line-height:18px;">66</div>
<div class="row" style="left:252px;top:321px;width:627px;height:19px;"></div>
<div class="exp" style="left:275px;top:326px;width:9px;height:9px;"></div>
<div class="t" style="left:293px;top:321px;width:240px;height:18px;line-height:18px;">Answer List</div>
<div class="t r" style="left:538px;top:321px;width:176px;height:18px;line-height:18px;">8.60 KB</div>
<div class="t r" style="left:719px;top:321px;width:156px;height:18px;line-height:18px;">26</div>
<div class="row" style="left:252px;top:340px;width:627px;height:19px;"></div>
<div class="exp" style="left:293px;top:345px;width:9px;height:9px;"></div>
<div class="t" style="left:311px;top:340px;width:240px;height:18px;line-height:18px;">Answer</div>
<div class="t r" style="left:538px;top:340px;width:176px;height:18px;line-height:18px;">8.60 KB</div>
<div class="t r" style="left:719px;top:340px;width:156px;height:18px;line-height:18px;">26</div>
<div class="row" style="left:252px;top:359px;width:627px;height:19px;"></div>
<div class="t" style="left:329px;top:359px;width:240px;height:18px;line-height:18px;">Domain Name</div>
<div class="t r" style="left:538px;top:359px;width:176px;height:18px;line-height:18px;">50.74 KB</div>
<div class="t r" style="left:719px;top:359px;width:156px;height:18px;line-height:18px;">135</div>
<div class="row sel" style="left:252px;top:378px;width:627px;height:19px;"></div>
<div class="t" style="left:329px;top:378px;width:240px;height:18px;line-height:18px;">Type</div>
<div class="t r" style="left:538px;top:378px;width:176px;height:18px;line-height:18px;">26.34 KB</div>
<div class="t r" style="left:719px;top:378px;width:156px;height:18px;line-height:18px;">77</div>
<div class="row" style="left:252px;top:397px;width:627px;height:19px;"></div>
<div class="t" style="left:329px;top:397px;width:240px;height:18px;line-height:18px;">Time to live</div>
<div class="t r" style="left:538px;top:397px;width:176px;height:18px;line-height:18px;">34.76 KB</div>
<div class="t r" style="left:719px;top:397px;width:156px;height:18px;line-height:18px;">97</div>
<div class="row" style="left:252px;top:416px;width:627px;height:19px;"></div>
<div class="t" style="left:329px;top:416px;width:240px;height:18px;line-height:18px;">Data Length</div>
<div class="t r" style="left:538px;top:416px;width:176px;height:18px;line-height:18px;">38.69 KB</div>
<div class="t r" style="left:719px;top:416px;width:156px;height:18px;line-height:18px;">109</div>
<div class="row" style="left:252px;top:435px;width:627px;height:19px;"></div>
<div class="t" style="left:329px;top:435px;width:240px;height:18px;line-height:18px;">Address</div>
<div class="t r" style="left:538px;top:435px;width:176px;height:18px;line-height:18px;">35.89 KB</div>
<div class="t r" style="left:719px;top:435px;width:156px;height:18px;line-height:18px;">89</div>
<div class="row" style="left:252px;top:454px;width:627px;height:19px;"></div>
<div class="exp" style="left:275px;top:459px;width:9px;height:9px;"></div>
<div class="t" style="left:293px;top:454px;width:240px;height:18px;line-height:18px;">Authority Resource Records List</div>
<div class="t r" style="left:538px;top:454px;width:176px;height:18px;line-height:18px;">8.60 KB</div>
<div class="t r" style="left:719px;top:454px;width:156px;height:18px;line-height:18px;">26</div>
<div class="row" style="left:252px;top:473px;width:627px;height:19px;"></div>
<div class="exp" style="left:293px;top:478px;width:9px;height:9px;"></div>
<div class="t" style="left:311px;top:473px;width:240px;height:18px;line-height:18px;">Authority Resource Records</div>
<div class="t r" style="left:538px;top:473px;width:176px;height:18px;line-height:18px;">8.60 KB</div>
<div class="t r" style="left:719px;top:473px;width:156px;height:18px;line-height:18px;">26</div>
<div class="row" style="left:252px;top:492px;width:627px;height:19px;"></div>
<div class="t" style="left:329px;top:492px;width:240px;height:18px;line-height:18px;">Name Server</div>
<div class="t r" style="left:538px;top:492px;width:176px;height:18px;line-height:18px;">51.72 KB</div>
<div class="t r" style="left:719px;top:492px;width:156px;height:18px;line-height:18px;">135</div>
<div class="row" style="left:252px;top:511px;width:627px;height:19px;"></div>
<div class="exp" style="left:275px;top:516px;width:9px;height:9px;"></div>
<div class="t" style="left:293px;top:511px;width:240px;height:18px;line-height:18px;">Additional Resource Records List</div>
<div class="t r" style="left:538px;top:511px;width:176px;height:18px;line-height:18px;">4.44 KB</div>
<div class="t r" style="left:719px;top:511px;width:156px;height:18px;line-height:18px;">11</div>
<div class="row" style="left:252px;top:530px;width:627px;height:19px;"></div>
<div class="exp" style="left:293px;top:535px;width:9px;height:9px;"></div>
<div class="t" style="left:311px;top:530px;width:240px;height:18px;line-height:18px;">Additional Resource Records</div>
<div class="t r" style="left:538px;top:530px;width:176px;height:18px;line-height:18px;">4.44 KB</div>
<div class="t r" style="left:719px;top:530px;width:156px;height:18px;line-height:18px;">11</div>
<div class="row" style="left:252px;top:549px;width:627px;height:19px;"></div>
<div class="t" style="left:329px;top:549px;width:240px;height:18px;line-height:18px;">CNAME</div>
<div class="t r" style="left:538px;top:549px;width:176px;height:18px;line-height:18px;">16.28 KB</div>
<div class="t r" style="left:719px;top:549px;width:156px;height:18px;line-height:18px;">43</div>
<div class="row" style="left:252px;top:568px;width:627px;height:19px;"></div>
<div class="t" style="left:329px;top:568px;width:240px;height:18px;line-height:18px;">AAAA Address</div>
<div class="t r" style="left:538px;top:568px;width:176px;height:18px;line-height:18px;">6.59 KB</div>
<div class="t r" style="left:719px;top:568px;width:156px;height:18px;line-height:18px;">18</div>
<div style="left:538px;top:244px;width:1px;height:343px;background:#dadfe8;"></div>
<div style="left:719px;top:244px;width:1px;height:343px;background:#dadfe8;"></div>
<div style="left:878px;top:244px;width:1px;height:343px;background:#dadfe8;"></div>
<div style="left:279px;top:245px;width:1px;height:80px;border-left:1px dotted #bfc4cb;"></div>
<div style="left:279px;top:335px;width:1px;height:123px;border-left:1px dotted #bfc4cb;"></div>
<div style="left:279px;top:468px;width:1px;height:47px;border-left:1px dotted #bfc4cb;"></div>
<div style="left:297px;top:245px;width:1px;height:4px;border-left:1px dotted #bfc4cb;"></div>
<div style="left:297px;top:335px;width:1px;height:9px;border-left:1px dotted #bfc4cb;"></div>
<div style="left:297px;top:468px;width:1px;height:9px;border-left:1px dotted #bfc4cb;"></div>
<div style="left:297px;top:525px;width:1px;height:9px;border-left:1px dotted #bfc4cb;"></div>
<div style="left:315px;top:263px;width:1px;height:48px;border-left:1px dotted #bfc4cb;"></div>
<div style="left:316px;top:273px;width:10px;height:1px;border-top:1px dotted #bfc4cb;"></div>
<div style="left:316px;top:292px;width:10px;height:1px;border-top:1px dotted #bfc4cb;"></div>
<div style="left:316px;top:311px;width:10px;height:1px;border-top:1px dotted #bfc4cb;"></div>
<div style="left:315px;top:358px;width:1px;height:86px;border-left:1px dotted #bfc4cb;"></div>
<div style="left:316px;top:368px;width:10px;height:1px;border-top:1px dotted #bfc4cb;"></div>
<div style="left:316px;top:387px;width:10px;height:1px;border-top:1px dotted #bfc4cb;"></div>
<div style="left:316px;top:406px;width:10px;height:1px;border-top:1px dotted #bfc4cb;"></div>
<div style="left:316px;top:425px;width:10px;height:1px;border-top:1px dotted #bfc4cb;"></div>
<div style="left:316px;top:444px;width:10px;height:1px;border-top:1px dotted #bfc4cb;"></div>
<div style="left:315px;top:491px;width:1px;height:10px;border-left:1px dotted #bfc4cb;"></div>
<div style="left:316px;top:501px;width:10px;height:1px;border-top:1px dotted #bfc4cb;"></div>
<div style="left:315px;top:548px;width:1px;height:29px;border-left:1px dotted #bfc4cb;"></div>
<div style="left:316px;top:558px;width:10px;height:1px;border-top:1px dotted #bfc4cb;"></div>
<div style="left:316px;top:577px;width:10px;height:1px;border-top:1px dotted #bfc4cb;"></div>
<div class="sb" style="left:1064px;top:220px;width:15px;height:378px;"></div>
<div class="th" style="left:1065px;top:408px;width:13px;height:172px;"></div>
<svg style="left:1066px;top:226px" width="11" height="8" viewBox="0 0 11 8"><path d="M1.500 6.500l4-4.500 4 4.500" stroke="#444" stroke-width="1.600" fill="none"/></svg>
<svg style="left:1066px;top:584px" width="11" height="8" viewBox="0 0 11 8"><path d="M1.500 1.500l4 4.500 4-4.500" stroke="#444" stroke-width="1.600" fill="none"/></svg>
<div style="left:1079px;top:220px;width:5px;height:379px;background:#8fb4ee;"></div>
<div style="left:1079px;top:189px;width:5px;height:31px;background:linear-gradient(#dfebfa,#c7dbf7 55%,#b9d2f5);"></div>
<!-- top-right pane: decoding field value -->
<div class="tb" style="left:1084px;top:189px;width:830px;height:31px;"></div>
<svg style="left:1090px;top:195px" width="18" height="18" viewBox="0 0 18 18"><rect x="1.500" y="1.500" width="9" height="11" fill="#f6f8fb" stroke="#9aa6ba"/><rect x="7" y="7" width="9.500" height="9.500" rx="1" fill="#3b3fa8" stroke="#25286e"/><rect x="9" y="7.500" width="5.500" height="3.500" fill="#e8ecf8"/><rect x="9.500" y="13" width="4.500" height="3.500" fill="#c8cce8"/></svg>
<svg style="left:1120px;top:195px" width="18" height="18" viewBox="0 0 18 18"><path d="M2 3l6 8M14 1l-6 12" stroke="#2a66b8" stroke-width="2" fill="none"/><circle cx="10" cy="13" r="3.500" fill="#2a8a8a"/></svg>
<svg style="left:1146px;top:195px" width="18" height="18" viewBox="0 0 18 18"><path d="M14.500 7a6 6 0 0 0-11-1" stroke="#2f7fd6" stroke-width="3" fill="none"/><path d="M1.500 2.500v6h6z" fill="#2f7fd6"/><path d="M3.500 11a6 6 0 0 0 11 1" stroke="#2f7fd6" stroke-width="3" fill="none"/><path d="M16.500 15.500v-6h-6z" fill="#2f7fd6"/></svg>
<div style="left:1168px;top:203px;width:0px;height:0px;border:3px solid transparent;border-top:3.500px solid #222;"></div>
<div class="t" style="left:1186px;top:190px;width:40px;height:29px;line-height:29px;color:#1e1e1e;">Filter:</div>
<div class="inp" style="left:1219px;top:193px;width:250px;height:23px;"></div>
<div style="left:1472px;top:202px;width:0px;height:0px;border:4px solid transparent;border-top:4.500px solid #222;"></div>
<div class="inp" style="left:1483px;top:193px;width:164px;height:23px;"></div>
<div class="t" style="left:1488px;top:193px;width:40px;height:23px;line-height:23px;">All</div>
<div style="left:1650px;top:202px;width:0px;height:0px;border:4px solid transparent;border-top:4.500px solid #222;"></div>
<div style="left:1666px;top:198px;width:13px;height:13px;background:#fff;border:1px solid #8c9ab2;"></div>
<div class="t" style="left:1686px;top:190px;width:90px;height:29px;line-height:29px;">Exactly Match</div>
<svg style="left:1763px;top:195px" width="18" height="18" viewBox="0 0 18 18"><circle cx="7" cy="7" r="5" fill="#eef4fb" stroke="#8a96a8" stroke-width="1.500"/><path d="M11.500 11.500l3 3" stroke="#d8a020" stroke-width="3" stroke-linecap="round"/></svg>
<div class="t" style="left:1897px;top:190px;width:14px;height:12px;line-height:12px;font-size:9px;color:#333;text-align:center;letter-spacing:0;">»</div>
<div style="left:1900px;top:208px;width:8px;height:2px;background:#333;"></div>
<div style="left:1900px;top:212px;width:0px;height:0px;border:4px solid transparent;border-top:4px solid #333;"></div>
<div class="hdr" style="left:1084px;top:220px;width:780px;height:24px;"></div>
<div class="t hc" style="left:1084px;top:220px;width:219px;height:23px;line-height:23px;padding-left:6px;">Decoding Field Value</div>
<div class="t hc r" style="left:1303px;top:220px;width:179px;height:23px;line-height:23px;padding-right:5px;">Count of Statistics</div>
<div class="t hc r" style="left:1482px;top:220px;width:160px;height:23px;line-height:23px;padding-right:22px;">Percentage%</div>
<div style="left:1628px;top:230px;width:0px;height:0px;border:4px solid transparent;border-top:4.500px solid #222;"></div>
<div class="t hc" style="left:1642px;top:220px;width:222px;height:23px;line-height:23px;padding-left:7px;">Comment</div>
<div class="row sel" style="left:1084px;top:245px;width:780px;height:19px;"></div>
<div class="t" style="left:1089px;top:245px;width:100px;height:18px;line-height:18px;">2</div>
<div class="t r" style="left:1303px;top:245px;width:174px;height:18px;line-height:18px;">135</div>
<div class="t r" style="left:1482px;top:245px;width:156px;height:18px;line-height:18px;">47.368%</div>
<div class="t" style="left:1647px;top:245px;width:220px;height:18px;line-height:18px;">NS (authoritative Name Server)</div>
<div class="row" style="left:1084px;top:264px;width:780px;height:19px;"></div>
<div class="t" style="left:1089px;top:264px;width:100px;height:18px;line-height:18px;">1</div>
<div class="t r" style="left:1303px;top:264px;width:174px;height:18px;line-height:18px;">89</div>
<div class="t r" style="left:1482px;top:264px;width:156px;height:18px;line-height:18px;">31.228%</div>
<div class="t" style="left:1647px;top:264px;width:220px;height:18px;line-height:18px;">A (Host Address)</div>
<div class="row" style="left:1084px;top:283px;width:780px;height:19px;"></div>
<div class="t" style="left:1089px;top:283px;width:100px;height:18px;line-height:18px;">5</div>
<div class="t r" style="left:1303px;top:283px;width:174px;height:18px;line-height:18px;">43</div>
<div class="t r" style="left:1482px;top:283px;width:156px;height:18px;line-height:18px;">15.088%</div>
<div class="t" style="left:1647px;top:283px;width:220px;height:18px;line-height:18px;">CNAME (Canonical NAME for an alias)</div>
<div class="row" style="left:1084px;top:302px;width:780px;height:19px;"></div>
<div class="t" style="left:1089px;top:302px;width:100px;height:18px;line-height:18px;">28</div>
<div class="t r" style="left:1303px;top:302px;width:174px;height:18px;line-height:18px;">18</div>
<div class="t r" style="left:1482px;top:302px;width:156px;height:18px;line-height:18px;">6.316%</div>
<div class="t" style="left:1647px;top:302px;width:220px;height:18px;line-height:18px;">AAAA (IPv6 Address)</div>
<div style="left:1303px;top:244px;width:1px;height:77px;background:#dadfe8;"></div>
<div style="left:1482px;top:244px;width:1px;height:77px;background:#dadfe8;"></div>
<div style="left:1642px;top:244px;width:1px;height:77px;background:#dadfe8;"></div>
<div style="left:1864px;top:244px;width:1px;height:77px;background:#dadfe8;"></div>
<div style="left:252px;top:598px;width:1660px;height:2px;background:#6f9fe0;"></div>
<div style="left:252px;top:600px;width:1660px;height:27px;background:#bcd7fb;"></div>
<!-- bottom pane: UDP Conversation -->
<div style="left:252px;top:623px;width:1660px;height:4px;background:linear-gradient(#6c98cc 0,#6c98cc 45%,#eca090 50%);"></div>
<svg style="left:252px;top:607px" width="30" height="19" viewBox="0 0 30 19"><path d="M1 18.500C10 16 12 1 24 1H30V18.500z" fill="#eaf1fb" stroke="#5a84c6"/></svg>
<div class="dtab" style="left:276px;top:607px;width:90px;height:18px;line-height:18px;border-left:none;border-radius:0 4px 0 0;text-align:left;">IP Conversation</div>
<svg style="left:352px;top:606px" width="30" height="20" viewBox="0 0 30 20"><path d="M0 20C10 17 12 1 24 1H30V20z" fill="url(#og)" stroke="#e0a040"/></svg>
<div class="atab" style="left:378px;top:606px;width:104px;height:20px;border-left:none;border-radius:0 4px 0 0;"></div>
<div class="t" style="left:372px;top:607px;width:110px;height:18px;line-height:18px;color:#14284f;font-weight:bold;font-size:11.6px;letter-spacing:0;">UDP Conversation</div>
<div class="dtab" style="left:483px;top:607px;width:45px;height:18px;line-height:18px;">Packet</div>
<svg style="left:1884px;top:606px" width="26" height="12" viewBox="0 0 26 12"><path d="M8 1.500v9l-6-4.500z" fill="#9fbbe6" stroke="#4a72b4"/><path d="M18 1.500v9l6-4.500z" fill="#9fbbe6" stroke="#4a72b4"/></svg>
<div style="left:252px;top:627px;width:1660px;height:28px;background:linear-gradient(#eaf2fc,#d0e1f9);"></div>
<svg style="left:261px;top:632px" width="18" height="18" viewBox="0 0 18 18"><rect x="1.500" y="1.500" width="9" height="11" fill="#f6f8fb" stroke="#9aa6ba"/><rect x="7" y="7" width="9.500" height="9.500" rx="1" fill="#3b3fa8" stroke="#25286e"/><rect x="9" y="7.500" width="5.500" height="3.500" fill="#e8ecf8"/><rect x="9.500" y="13" width="4.500" height="3.500" fill="#c8cce8"/></svg>
<svg style="left:291px;top:632px" width="18" height="18" viewBox="0 0 18 18"><path d="M2 3l6 8M14 1l-6 12" stroke="#2a66b8" stroke-width="2" fill="none"/><circle cx="10" cy="13" r="3.500" fill="#2a8a8a"/></svg>
<svg style="left:316px;top:632px" width="18" height="18" viewBox="0 0 18 18"><path d="M14.500 7a6 6 0 0 0-11-1" stroke="#2f7fd6" stroke-width="3" fill="none"/><path d="M1.500 2.500v6h6z" fill="#2f7fd6"/><path d="M3.500 11a6 6 0 0 0 11 1" stroke="#2f7fd6" stroke-width="3" fill="none"/><path d="M16.500 15.500v-6h-6z" fill="#2f7fd6"/></svg>
<div style="left:339px;top:640px;width:0px;height:0px;border:3px solid transparent;border-top:3.500px solid #222;"></div>
<div class="t" style="left:356px;top:628px;width:40px;height:27px;line-height:27px;color:#1e1e1e;">Filter:</div>
<div class="inp" style="left:390px;top:631px;width:248px;height:21px;"></div>
<div style="left:641px;top:639px;width:0px;height:0px;border:4px solid transparent;border-top:4.500px solid #222;"></div>
<div class="inp" style="left:652px;top:631px;width:165px;height:21px;"></div>
<div class="t" style="left:657px;top:631px;width:40px;height:21px;line-height:21px;">All</div>
<div style="left:820px;top:639px;width:0px;height:0px;border:4px solid transparent;border-top:4.500px solid #222;"></div>
<div style="left:836px;top:635px;width:13px;height:13px;background:#fff;border:1px solid #8c9ab2;"></div>
<div class="t" style="left:856px;top:628px;width:90px;height:27px;line-height:27px;">Exactly Match</div>
<svg style="left:933px;top:632px" width="18" height="18" viewBox="0 0 18 18"><circle cx="7" cy="7" r="5" fill="#eef4fb" stroke="#8a96a8" stroke-width="1.500"/><path d="M11.500 11.500l3 3" stroke="#d8a020" stroke-width="3" stroke-linecap="round"/></svg>
<div style="left:1759px;top:628px;width:120px;height:27px;background:#c8dcf7;border:2px solid #7a9fd6;"></div>
<div class="t" style="left:1768px;top:628px;width:112px;height:27px;line-height:27px;font-weight:bold;color:#14284f;font-size:11.600px;letter-spacing:0;">UDP Conversation:</div>
<div style="left:1879px;top:628px;width:28px;height:27px;background:#fff;border:2px solid #7a9fd6;border-left:none;"></div>
<div class="t" style="left:1879px;top:628px;width:28px;height:27px;line-height:27px;text-align:center;">26</div>
<div class="hdr" style="left:252px;top:655px;width:1641px;height:24px;"></div>
<div class="t hc" style="left:252px;top:655px;width:163px;height:23px;line-height:23px;padding-left:7px;">Node 1 -&gt;</div>
<div class="t hc" style="left:415px;top:655px;width:80px;height:23px;line-height:23px;padding-left:7px;">Port 1 -&gt;</div>
<div class="t hc" style="left:495px;top:655px;width:151px;height:23px;line-height:23px;padding-left:7px;">Endpoint 1 Geolocation-&gt;</div>
<div class="t hc" style="left:646px;top:655px;width:155px;height:23px;line-height:23px;padding-left:7px;">&lt;- Node 2</div>
<div class="t hc" style="left:801px;top:655px;width:80px;height:23px;line-height:23px;padding-left:7px;">&lt;- Port 2</div>
<div class="t hc" style="left:881px;top:655px;width:152px;height:23px;line-height:23px;padding-left:7px;">&lt;-Endpoint 2 Geolocation</div>
<div class="t hc r" style="left:1033px;top:655px;width:135px;height:23px;line-height:23px;padding-right:5px;">Duration</div>
<div class="t hc r" style="left:1168px;top:655px;width:101px;height:23px;line-height:23px;padding-right:5px;">Bytes</div>
<div class="t hc r" style="left:1269px;top:655px;width:100px;height:23px;line-height:23px;padding-right:5px;">Bytes -&gt;</div>
<div class="t hc r" style="left:1369px;top:655px;width:100px;height:23px;line-height:23px;padding-right:5px;">&lt;- Bytes</div>
<div class="t hc r" style="left:1469px;top:655px;width:100px;height:23px;line-height:23px;padding-right:5px;">Payload</div>
<div class="t hc r" style="left:1569px;top:655px;width:100px;height:23px;line-height:23px;padding-right:5px;">Payload -&gt;</div>
<div class="t hc r" style="left:1669px;top:655px;width:100px;height:23px;line-height:23px;padding-right:5px;">&lt;- Payload</div>
<div class="t hc r" style="left:1769px;top:655px;width:100px;height:23px;line-height:23px;padding-right:5px;">Packets</div>
<div style="left:252px;top:679px;width:1641px;height:313px;overflow:hidden;">
<div class="row sel" style="left:0px;top:1px;width:1644px;height:19px;"></div>
<svg style="left:7px;top:3px" width="15" height="15" viewBox="0 0 15 15"><rect x="1" y="1" width="13" height="9" rx="1" fill="#3f86d2" stroke="#3a64a0"/><path d="M3 3l4.500 3.500 4.500-3.500v-.500h-9z" fill="#a9d6f8"/><rect x="1.500" y="11" width="12" height="3.500" fill="#8a94a6" stroke="#6a7488" stroke-width=".600"/><rect x="3" y="12" width="9" height="1.200" fill="#e4e8ee"/></svg>
<div class="t n" style="left:27px;top:1px;width:90px;height:18px;line-height:18px;">192.168</div>
<div class="t" style="left:168px;top:1px;width:60px;height:18px;line-height:18px;">50722</div>
<div class="t" style="left:248px;top:1px;width:60px;height:18px;line-height:18px;">Local</div>
<svg style="left:398px;top:3px" width="15" height="15" viewBox="0 0 15 15"><rect x="1" y="1" width="13" height="9" rx="1" fill="#3f86d2" stroke="#3a64a0"/><path d="M3 3l4.500 3.500 4.500-3.500v-.500h-9z" fill="#a9d6f8"/><rect x="1.500" y="11" width="12" height="3.500" fill="#8a94a6" stroke="#6a7488" stroke-width=".600"/><rect x="3" y="12" width="9" height="1.200" fill="#e4e8ee"/></svg>
<div class="t n" style="left:419px;top:1px;width:90px;height:18px;line-height:18px;">192.16</div>
<div class="t" style="left:557px;top:1px;width:40px;height:18px;line-height:18px;">53</div>
<div class="t" style="left:638px;top:1px;width:60px;height:18px;line-height:18px;">Local</div>
<div class="t r n" style="left:780px;top:1px;width:131px;height:18px;line-height:18px;">00:00:00.001692000</div>
<div class="t r n" style="left:913px;top:1px;width:96px;height:18px;line-height:18px;">222.00 B</div>
<div class="t r n" style="left:1014px;top:1px;width:96px;height:18px;line-height:18px;">73.00 B</div>
<div class="t r n" style="left:1114px;top:1px;width:96px;height:18px;line-height:18px;">149.00 B</div>
<div class="t r n" style="left:1214px;top:1px;width:96px;height:18px;line-height:18px;">138.00 B</div>
<div class="t r n" style="left:1314px;top:1px;width:96px;height:18px;line-height:18px;">31.00 B</div>
<div class="t r n" style="left:1414px;top:1px;width:96px;height:18px;line-height:18px;">107.00 B</div>
<div class="t r" style="left:1514px;top:1px;width:96px;height:18px;line-height:18px;">2</div>
<div class="row" style="left:0px;top:20px;width:1644px;height:19px;"></div>
<svg style="left:7px;top:22px" width="15" height="15" viewBox="0 0 15 15"><rect x="1" y="1" width="13" height="9" rx="1" fill="#3f86d2" stroke="#3a64a0"/><path d="M3 3l4.500 3.500 4.500-3.500v-.500h-9z" fill="#a9d6f8"/><rect x="1.500" y="11" width="12" height="3.500" fill="#8a94a6" stroke="#6a7488" stroke-width=".600"/><rect x="3" y="12" width="9" height="1.200" fill="#e4e8ee"/></svg>
<div class="t n" style="left:27px;top:20px;width:90px;height:18px;line-height:18px;">192.168</div>
<div class="t" style="left:168px;top:20px;width:60px;height:18px;line-height:18px;">61409</div>
<div class="t" style="left:248px;top:20px;width:60px;height:18px;line-height:18px;">Local</div>
<svg style="left:398px;top:22px" width="15" height="15" viewBox="0 0 15 15"><rect x="1" y="1" width="13" height="9" rx="1" fill="#3f86d2" stroke="#3a64a0"/><path d="M3 3l4.500 3.500 4.500-3.500v-.500h-9z" fill="#a9d6f8"/><rect x="1.500" y="11" width="12" height="3.500" fill="#8a94a6" stroke="#6a7488" stroke-width=".600"/><rect x="3" y="12" width="9" height="1.200" fill="#e4e8ee"/></svg>
<div class="t n" style="left:419px;top:20px;width:90px;height:18px;line-height:18px;">192.16</div>
<div class="t" style="left:557px;top:20px;width:40px;height:18px;line-height:18px;">53</div>
<div class="t" style="left:638px;top:20px;width:60px;height:18px;line-height:18px;">Local</div>
<div class="t r n" style="left:780px;top:20px;width:131px;height:18px;line-height:18px;">00:00:00.037078000</div>
<div class="t r n" style="left:913px;top:20px;width:96px;height:18px;line-height:18px;">316.00 B</div>
<div class="t r n" style="left:1014px;top:20px;width:96px;height:18px;line-height:18px;">152.00 B</div>
<div class="t r n" style="left:1114px;top:20px;width:96px;height:18px;line-height:18px;">164.00 B</div>
<div class="t r n" style="left:1214px;top:20px;width:96px;height:18px;line-height:18px;">190.00 B</div>
<div class="t r n" style="left:1314px;top:20px;width:96px;height:18px;line-height:18px;">68.00 B</div>
<div class="t r n" style="left:1414px;top:20px;width:96px;height:18px;line-height:18px;">122.00 B</div>
<div class="t r" style="left:1514px;top:20px;width:96px;height:18px;line-height:18px;">3</div>
<div class="row" style="left:0px;top:39px;width:1644px;height:19px;"></div>
<svg style="left:7px;top:41px" width="15" height="15" viewBox="0 0 15 15"><rect x="1" y="1" width="13" height="9" rx="1" fill="#3f86d2" stroke="#3a64a0"/><path d="M3 3l4.500 3.500 4.500-3.500v-.500h-9z" fill="#a9d6f8"/><rect x="1.500" y="11" width="12" height="3.500" fill="#8a94a6" stroke="#6a7488" stroke-width=".600"/><rect x="3" y="12" width="9" height="1.200" fill="#e4e8ee"/></svg>
<div class="t n" style="left:27px;top:39px;width:90px;height:18px;line-height:18px;">192.168</div>
<div class="t" style="left:168px;top:39px;width:60px;height:18px;line-height:18px;">56590</div>
<div class="t" style="left:248px;top:39px;width:60px;height:18px;line-height:18px;">Local</div>
<svg style="left:398px;top:41px" width="15" height="15" viewBox="0 0 15 15"><rect x="1" y="1" width="13" height="9" rx="1" fill="#3f86d2" stroke="#3a64a0"/><path d="M3 3l4.500 3.500 4.500-3.500v-.500h-9z" fill="#a9d6f8"/><rect x="1.500" y="11" width="12" height="3.500" fill="#8a94a6" stroke="#6a7488" stroke-width=".600"/><rect x="3" y="12" width="9" height="1.200" fill="#e4e8ee"/></svg>
<div class="t n" style="left:419px;top:39px;width:90px;height:18px;line-height:18px;">192.16</div>
<div class="t" style="left:557px;top:39px;width:40px;height:18px;line-height:18px;">53</div>
<div class="t" style="left:638px;top:39px;width:60px;height:18px;line-height:18px;">Local</div>
<div class="t r n" style="left:780px;top:39px;width:131px;height:18px;line-height:18px;">00:00:00.003659000</div>
<div class="t r n" style="left:913px;top:39px;width:96px;height:18px;line-height:18px;">476.00 B</div>
<div class="t r n" style="left:1014px;top:39px;width:96px;height:18px;line-height:18px;">84.00 B</div>
<div class="t r n" style="left:1114px;top:39px;width:96px;height:18px;line-height:18px;">392.00 B</div>
<div class="t r n" style="left:1214px;top:39px;width:96px;height:18px;line-height:18px;">392.00 B</div>
<div class="t r n" style="left:1314px;top:39px;width:96px;height:18px;line-height:18px;">42.00 B</div>
<div class="t r n" style="left:1414px;top:39px;width:96px;height:18px;line-height:18px;">350.00 B</div>
<div class="t r" style="left:1514px;top:39px;width:96px;height:18px;line-height:18px;">2</div>
<div class="row" style="left:0px;top:58px;width:1644px;height:19px;"></div>
<svg style="left:7px;top:60px" width="15" height="15" viewBox="0 0 15 15"><rect x="1" y="1" width="13" height="9" rx="1" fill="#3f86d2" stroke="#3a64a0"/><path d="M3 3l4.500 3.500 4.500-3.500v-.500h-9z" fill="#a9d6f8"/><rect x="1.500" y="11" width="12" height="3.500" fill="#8a94a6" stroke="#6a7488" stroke-width=".600"/><rect x="3" y="12" width="9" height="1.200" fill="#e4e8ee"/></svg>
<div class="t n" style="left:27px;top:58px;width:90px;height:18px;line-height:18px;">192.168</div>
<div class="t" style="left:168px;top:58px;width:60px;height:18px;line-height:18px;">56043</div>
<div class="t" style="left:248px;top:58px;width:60px;height:18px;line-height:18px;">Local</div>
<svg style="left:398px;top:60px" width="15" height="15" viewBox="0 0 15 15"><rect x="1" y="1" width="13" height="9" rx="1" fill="#3f86d2" stroke="#3a64a0"/><path d="M3 3l4.500 3.500 4.500-3.500v-.500h-9z" fill="#a9d6f8"/><rect x="1.500" y="11" width="12" height="3.500" fill="#8a94a6" stroke="#6a7488" stroke-width=".600"/><rect x="3" y="12" width="9" height="1.200" fill="#e4e8ee"/></svg>
<div class="t n" style="left:419px;top:58px;width:90px;height:18px;line-height:18px;">192.16</div>
<div class="t" style="left:557px;top:58px;width:40px;height:18px;line-height:18px;">53</div>
<div class="t" style="left:638px;top:58px;width:60px;height:18px;line-height:18px;">Local</div>
<div class="t r n" style="left:780px;top:58px;width:131px;height:18px;line-height:18px;">00:00:00.038021000</div>
<div class="t r n" style="left:913px;top:58px;width:96px;height:18px;line-height:18px;">593.00 B</div>
<div class="t r n" style="left:1014px;top:58px;width:96px;height:18px;line-height:18px;">166.00 B</div>
<div class="t r n" style="left:1114px;top:58px;width:96px;height:18px;line-height:18px;">427.00 B</div>
<div class="t r n" style="left:1214px;top:58px;width:96px;height:18px;line-height:18px;">467.00 B</div>
<div class="t r n" style="left:1314px;top:58px;width:96px;height:18px;line-height:18px;">82.00 B</div>
<div class="t r n" style="left:1414px;top:58px;width:96px;height:18px;line-height:18px;">385.00 B</div>
<div class="t r" style="left:1514px;top:58px;width:96px;height:18px;line-height:18px;">3</div>
<div class="row" style="left:0px;top:77px;width:1644px;height:19px;"></div>
<svg style="left:7px;top:79px" width="15" height="15" viewBox="0 0 15 15"><rect x="1" y="1" width="13" height="9" rx="1" fill="#3f86d2" stroke="#3a64a0"/><path d="M3 3l4.500 3.500 4.500-3.500v-.500h-9z" fill="#a9d6f8"/><rect x="1.500" y="11" width="12" height="3.500" fill="#8a94a6" stroke="#6a7488" stroke-width=".600"/><rect x="3" y="12" width="9" height="1.200" fill="#e4e8ee"/></svg>
<div class="t n" style="left:27px;top:77px;width:90px;height:18px;line-height:18px;">192.168</div>
<div class="t" style="left:168px;top:77px;width:60px;height:18px;line-height:18px;">54232</div>
<div class="t" style="left:248px;top:77px;width:60px;height:18px;line-height:18px;">Local</div>
<svg style="left:398px;top:79px" width="15" height="15" viewBox="0 0 15 15"><rect x="1" y="1" width="13" height="9" rx="1" fill="#3f86d2" stroke="#3a64a0"/><path d="M3 3l4.500 3.500 4.500-3.500v-.500h-9z" fill="#a9d6f8"/><rect x="1.500" y="11" width="12" height="3.500" fill="#8a94a6" stroke="#6a7488" stroke-width=".600"/><rect x="3" y="12" width="9" height="1.200" fill="#e4e8ee"/></svg>
<div class="t n" style="left:419px;top:77px;width:90px;height:18px;line-height:18px;">192.16</div>
<div class="t" style="left:557px;top:77px;width:40px;height:18px;line-height:18px;">53</div>
<div class="t" style="left:638px;top:77px;width:60px;height:18px;line-height:18px;">Local</div>
<div class="t r n" style="left:780px;top:77px;width:131px;height:18px;line-height:18px;">00:00:00.000830000</div>
<div class="t r n" style="left:913px;top:77px;width:96px;height:18px;line-height:18px;">412.00 B</div>
<div class="t r n" style="left:1014px;top:77px;width:96px;height:18px;line-height:18px;">74.00 B</div>
<div class="t r n" style="left:1114px;top:77px;width:96px;height:18px;line-height:18px;">338.00 B</div>
<div class="t r n" style="left:1214px;top:77px;width:96px;height:18px;line-height:18px;">328.00 B</div>
<div class="t r n" style="left:1314px;top:77px;width:96px;height:18px;line-height:18px;">32.00 B</div>
<div class="t r n" style="left:1414px;top:77px;width:96px;height:18px;line-height:18px;">296.00 B</div>
<div class="t r" style="left:1514px;top:77px;width:96px;height:18px;line-height:18px;">2</div>
<div class="row" style="left:0px;top:96px;width:1644px;height:19px;"></div>
<svg style="left:7px;top:98px" width="15" height="15" viewBox="0 0 15 15"><rect x="1" y="1" width="13" height="9" rx="1" fill="#3f86d2" stroke="#3a64a0"/><path d="M3 3l4.500 3.500 4.500-3.500v-.500h-9z" fill="#a9d6f8"/><rect x="1.500" y="11" width="12" height="3.500" fill="#8a94a6" stroke="#6a7488" stroke-width=".600"/><rect x="3" y="12" width="9" height="1.200" fill="#e4e8ee"/></svg>
<div class="t n" style="left:27px;top:96px;width:90px;height:18px;line-height:18px;">192.168</div>
<div class="t" style="left:168px;top:96px;width:60px;height:18px;line-height:18px;">58262</div>
<div class="t" style="left:248px;top:96px;width:60px;height:18px;line-height:18px;">Local</div>
<svg style="left:398px;top:98px" width="15" height="15" viewBox="0 0 15 15"><rect x="1" y="1" width="13" height="9" rx="1" fill="#3f86d2" stroke="#3a64a0"/><path d="M3 3l4.500 3.500 4.500-3.500v-.500h-9z" fill="#a9d6f8"/><rect x="1.500" y="11" width="12" height="3.500" fill="#8a94a6" stroke="#6a7488" stroke-width=".600"/><rect x="3" y="12" width="9" height="1.200" fill="#e4e8ee"/></svg>
<div class="t n" style="left:419px;top:96px;width:90px;height:18px;line-height:18px;">192.16</div>
<div class="t" style="left:557px;top:96px;width:40px;height:18px;line-height:18px;">53</div>
<div class="t" style="left:638px;top:96px;width:60px;height:18px;line-height:18px;">Local</div>
<div class="t r n" style="left:780px;top:96px;width:131px;height:18px;line-height:18px;">00:00:00.000880000</div>
<div class="t r n" style="left:913px;top:96px;width:96px;height:18px;line-height:18px;">428.00 B</div>
<div class="t r n" style="left:1014px;top:96px;width:96px;height:18px;line-height:18px;">77.00 B</div>
<div class="t r n" style="left:1114px;top:96px;width:96px;height:18px;line-height:18px;">351.00 B</div>
<div class="t r n" style="left:1214px;top:96px;width:96px;height:18px;line-height:18px;">344.00 B</div>
<div class="t r n" style="left:1314px;top:96px;width:96px;height:18px;line-height:18px;">35.00 B</div>
<div class="t r n" style="left:1414px;top:96px;width:96px;height:18px;line-height:18px;">309.00 B</div>
<div class="t r" style="left:1514px;top:96px;width:96px;height:18px;line-height:18px;">2</div>
<div class="row" style="left:0px;top:115px;width:1644px;height:19px;"></div>
<svg style="left:7px;top:117px" width="15" height="15" viewBox="0 0 15 15"><rect x="1" y="1" width="13" height="9" rx="1" fill="#3f86d2" stroke="#3a64a0"/><path d="M3 3l4.500 3.500 4.500-3.500v-.500h-9z" fill="#a9d6f8"/><rect x="1.500" y="11" width="12" height="3.500" fill="#8a94a6" stroke="#6a7488" stroke-width=".600"/><rect x="3" y="12" width="9" height="1.200" fill="#e4e8ee"/></svg>
<div class="t n" style="left:27px;top:115px;width:90px;height:18px;line-height:18px;">192.168</div>
<div class="t" style="left:168px;top:115px;width:60px;height:18px;line-height:18px;">57749</div>
<div class="t" style="left:248px;top:115px;width:60px;height:18px;line-height:18px;">Local</div>
<svg style="left:398px;top:117px" width="15" height="15" viewBox="0 0 15 15"><rect x="1" y="1" width="13" height="9" rx="1" fill="#3f86d2" stroke="#3a64a0"/><path d="M3 3l4.500 3.500 4.500-3.500v-.500h-9z" fill="#a9d6f8"/><rect x="1.500" y="11" width="12" height="3.500" fill="#8a94a6" stroke="#6a7488" stroke-width=".600"/><rect x="3" y="12" width="9" height="1.200" fill="#e4e8ee"/></svg>
<div class="t n" style="left:419px;top:115px;width:90px;height:18px;line-height:18px;">192.16</div>
<div class="t" style="left:557px;top:115px;width:40px;height:18px;line-height:18px;">53</div>
<div class="t" style="left:638px;top:115px;width:60px;height:18px;line-height:18px;">Local</div>
<div class="t r n" style="left:780px;top:115px;width:131px;height:18px;line-height:18px;">00:00:00.000983000</div>
<div class="t r n" style="left:913px;top:115px;width:96px;height:18px;line-height:18px;">594.00 B</div>
<div class="t r n" style="left:1014px;top:115px;width:96px;height:18px;line-height:18px;">89.00 B</div>
<div class="t r n" style="left:1114px;top:115px;width:96px;height:18px;line-height:18px;">505.00 B</div>
<div class="t r n" style="left:1214px;top:115px;width:96px;height:18px;line-height:18px;">510.00 B</div>
<div class="t r n" style="left:1314px;top:115px;width:96px;height:18px;line-height:18px;">47.00 B</div>
<div class="t r n" style="left:1414px;top:115px;width:96px;height:18px;line-height:18px;">463.00 B</div>
<div class="t r" style="left:1514px;top:115px;width:96px;height:18px;line-height:18px;">2</div>
<div class="row" style="left:0px;top:134px;width:1644px;height:19px;"></div>
<svg style="left:7px;top:136px" width="15" height="15" viewBox="0 0 15 15"><rect x="1" y="1" width="13" height="9" rx="1" fill="#3f86d2" stroke="#3a64a0"/><path d="M3 3l4.500 3.500 4.500-3.500v-.500h-9z" fill="#a9d6f8"/><rect x="1.500" y="11" width="12" height="3.500" fill="#8a94a6" stroke="#6a7488" stroke-width=".600"/><rect x="3" y="12" width="9" height="1.200" fill="#e4e8ee"/></svg>
<div class="t n" style="left:27px;top:134px;width:90px;height:18px;line-height:18px;">192.168</div>
<div class="t" style="left:168px;top:134px;width:60px;height:18px;line-height:18px;">62415</div>
<div class="t" style="left:248px;top:134px;width:60px;height:18px;line-height:18px;">Local</div>
<svg style="left:398px;top:136px" width="15" height="15" viewBox="0 0 15 15"><rect x="1" y="1" width="13" height="9" rx="1" fill="#3f86d2" stroke="#3a64a0"/><path d="M3 3l4.500 3.500 4.500-3.500v-.500h-9z" fill="#a9d6f8"/><rect x="1.500" y="11" width="12" height="3.500" fill="#8a94a6" stroke="#6a7488" stroke-width=".600"/><rect x="3" y="12" width="9" height="1.200" fill="#e4e8ee"/></svg>
<div class="t n" style="left:419px;top:134px;width:90px;height:18px;line-height:18px;">192.16</div>
<div class="t" style="left:557px;top:134px;width:40px;height:18px;line-height:18px;">53</div>
<div class="t" style="left:638px;top:134px;width:60px;height:18px;line-height:18px;">Local</div>
<div class="t r n" style="left:780px;top:134px;width:131px;height:18px;line-height:18px;">00:00:00.000810000</div>
<div class="t r n" style="left:913px;top:134px;width:96px;height:18px;line-height:18px;">301.00 B</div>
<div class="t r n" style="left:1014px;top:134px;width:96px;height:18px;line-height:18px;">72.00 B</div>
<div class="t r n" style="left:1114px;top:134px;width:96px;height:18px;line-height:18px;">229.00 B</div>
<div class="t r n" style="left:1214px;top:134px;width:96px;height:18px;line-height:18px;">217.00 B</div>
<div class="t r n" style="left:1314px;top:134px;width:96px;height:18px;line-height:18px;">30.00 B</div>
<div class="t r n" style="left:1414px;top:134px;width:96px;height:18px;line-height:18px;">187.00 B</div>
<div class="t r" style="left:1514px;top:134px;width:96px;height:18px;line-height:18px;">2</div>
<div class="row" style="left:0px;top:153px;width:1644px;height:19px;"></div>
<svg style="left:7px;top:155px" width="15" height="15" viewBox="0 0 15 15"><rect x="1" y="1" width="13" height="9" rx="1" fill="#3f86d2" stroke="#3a64a0"/><path d="M3 3l4.500 3.500 4.500-3.500v-.500h-9z" fill="#a9d6f8"/><rect x="1.500" y="11" width="12" height="3.500" fill="#8a94a6" stroke="#6a7488" stroke-width=".600"/><rect x="3" y="12" width="9" height="1.200" fill="#e4e8ee"/></svg>
<div class="t n" style="left:27px;top:153px;width:90px;height:18px;line-height:18px;">192.168</div>
<div class="t" style="left:168px;top:153px;width:60px;height:18px;line-height:18px;">60958</div>
<div class="t" style="left:248px;top:153px;width:60px;height:18px;line-height:18px;">Local</div>
<svg style="left:398px;top:155px" width="15" height="15" viewBox="0 0 15 15"><rect x="1" y="1" width="13" height="9" rx="1" fill="#3f86d2" stroke="#3a64a0"/><path d="M3 3l4.500 3.500 4.500-3.500v-.500h-9z" fill="#a9d6f8"/><rect x="1.500" y="11" width="12" height="3.500" fill="#8a94a6" stroke="#6a7488" stroke-width=".600"/><rect x="3" y="12" width="9" height="1.200" fill="#e4e8ee"/></svg>
<div class="t n" style="left:419px;top:153px;width:90px;height:18px;line-height:18px;">192.16</div>
<div class="t" style="left:557px;top:153px;width:40px;height:18px;line-height:18px;">53</div>
<div class="t" style="left:638px;top:153px;width:60px;height:18px;line-height:18px;">Local</div>
<div class="t r n" style="left:780px;top:153px;width:131px;height:18px;line-height:18px;">00:00:00.085446000</div>
<div class="t r n" style="left:913px;top:153px;width:96px;height:18px;line-height:18px;">318.00 B</div>
<div class="t r n" style="left:1014px;top:153px;width:96px;height:18px;line-height:18px;">142.00 B</div>
<div class="t r n" style="left:1114px;top:153px;width:96px;height:18px;line-height:18px;">176.00 B</div>
<div class="t r n" style="left:1214px;top:153px;width:96px;height:18px;line-height:18px;">192.00 B</div>
<div class="t r n" style="left:1314px;top:153px;width:96px;height:18px;line-height:18px;">58.00 B</div>
<div class="t r n" style="left:1414px;top:153px;width:96px;height:18px;line-height:18px;">134.00 B</div>
<div class="t r" style="left:1514px;top:153px;width:96px;height:18px;line-height:18px;">3</div>
<div class="row" style="left:0px;top:172px;width:1644px;height:19px;"></div>
<svg style="left:7px;top:174px" width="15" height="15" viewBox="0 0 15 15"><rect x="1" y="1" width="13" height="9" rx="1" fill="#3f86d2" stroke="#3a64a0"/><path d="M3 3l4.500 3.500 4.500-3.500v-.500h-9z" fill="#a9d6f8"/><rect x="1.500" y="11" width="12" height="3.500" fill="#8a94a6" stroke="#6a7488" stroke-width=".600"/><rect x="3" y="12" width="9" height="1.200" fill="#e4e8ee"/></svg>
<div class="t n" style="left:27px;top:172px;width:90px;height:18px;line-height:18px;">192.168</div>
<div class="t" style="left:168px;top:172px;width:60px;height:18px;line-height:18px;">60959</div>
<div class="t" style="left:248px;top:172px;width:60px;height:18px;line-height:18px;">Local</div>
<svg style="left:398px;top:174px" width="15" height="15" viewBox="0 0 15 15"><rect x="1" y="1" width="13" height="9" rx="1" fill="#3f86d2" stroke="#3a64a0"/><path d="M3 3l4.500 3.500 4.500-3.500v-.500h-9z" fill="#a9d6f8"/><rect x="1.500" y="11" width="12" height="3.500" fill="#8a94a6" stroke="#6a7488" stroke-width=".600"/><rect x="3" y="12" width="9" height="1.200" fill="#e4e8ee"/></svg>
<div class="t n" style="left:419px;top:172px;width:90px;height:18px;line-height:18px;">192.16</div>
<div class="t" style="left:557px;top:172px;width:40px;height:18px;line-height:18px;">53</div>
<div class="t" style="left:638px;top:172px;width:60px;height:18px;line-height:18px;">Local</div>
<div class="t r n" style="left:780px;top:172px;width:131px;height:18px;line-height:18px;">00:00:00.001535000</div>
<div class="t r n" style="left:913px;top:172px;width:96px;height:18px;line-height:18px;">230.00 B</div>
<div class="t r n" style="left:1014px;top:172px;width:96px;height:18px;line-height:18px;">86.00 B</div>
<div class="t r n" style="left:1114px;top:172px;width:96px;height:18px;line-height:18px;">144.00 B</div>
<div class="t r n" style="left:1214px;top:172px;width:96px;height:18px;line-height:18px;">146.00 B</div>
<div class="t r n" style="left:1314px;top:172px;width:96px;height:18px;line-height:18px;">44.00 B</div>
<div class="t r n" style="left:1414px;top:172px;width:96px;height:18px;line-height:18px;">102.00 B</div>
<div class="t r" style="left:1514px;top:172px;width:96px;height:18px;line-height:18px;">2</div>
<div class="row" style="left:0px;top:191px;width:1644px;height:19px;"></div>
<svg style="left:7px;top:193px" width="15" height="15" viewBox="0 0 15 15"><rect x="1" y="1" width="13" height="9" rx="1" fill="#3f86d2" stroke="#3a64a0"/><path d="M3 3l4.500 3.500 4.500-3.500v-.500h-9z" fill="#a9d6f8"/><rect x="1.500" y="11" width="12" height="3.500" fill="#8a94a6" stroke="#6a7488" stroke-width=".600"/><rect x="3" y="12" width="9" height="1.200" fill="#e4e8ee"/></svg>
<div class="t n" style="left:27px;top:191px;width:90px;height:18px;line-height:18px;">192.168</div>
<div class="t" style="left:168px;top:191px;width:60px;height:18px;line-height:18px;">55327</div>
<div class="t" style="left:248px;top:191px;width:60px;height:18px;line-height:18px;">Local</div>
<svg style="left:398px;top:193px" width="15" height="15" viewBox="0 0 15 15"><rect x="1" y="1" width="13" height="9" rx="1" fill="#3f86d2" stroke="#3a64a0"/><path d="M3 3l4.500 3.500 4.500-3.500v-.500h-9z" fill="#a9d6f8"/><rect x="1.500" y="11" width="12" height="3.500" fill="#8a94a6" stroke="#6a7488" stroke-width=".600"/><rect x="3" y="12" width="9" height="1.200" fill="#e4e8ee"/></svg>
<div class="t n" style="left:419px;top:191px;width:90px;height:18px;line-height:18px;">192.16</div>
<div class="t" style="left:557px;top:191px;width:40px;height:18px;line-height:18px;">53</div>
<div class="t" style="left:638px;top:191px;width:60px;height:18px;line-height:18px;">Local</div>
<div class="t r n" style="left:780px;top:191px;width:131px;height:18px;line-height:18px;">00:00:00.082947000</div>
<div class="t r n" style="left:913px;top:191px;width:96px;height:18px;line-height:18px;">402.00 B</div>
<div class="t r n" style="left:1014px;top:191px;width:96px;height:18px;line-height:18px;">168.00 B</div>
<div class="t r n" style="left:1114px;top:191px;width:96px;height:18px;line-height:18px;">234.00 B</div>
<div class="t r n" style="left:1214px;top:191px;width:96px;height:18px;line-height:18px;">276.00 B</div>
<div class="t r n" style="left:1314px;top:191px;width:96px;height:18px;line-height:18px;">84.00 B</div>
<div class="t r n" style="left:1414px;top:191px;width:96px;height:18px;line-height:18px;">192.00 B</div>
<div class="t r" style="left:1514px;top:191px;width:96px;height:18px;line-height:18px;">3</div>
<div class="row" style="left:0px;top:210px;width:1644px;height:19px;"></div>
<svg style="left:7px;top:212px" width="15" height="15" viewBox="0 0 15 15"><rect x="1" y="1" width="13" height="9" rx="1" fill="#3f86d2" stroke="#3a64a0"/><path d="M3 3l4.500 3.500 4.500-3.500v-.500h-9z" fill="#a9d6f8"/><rect x="1.500" y="11" width="12" height="3.500" fill="#8a94a6" stroke="#6a7488" stroke-width=".600"/><rect x="3" y="12" width="9" height="1.200" fill="#e4e8ee"/></svg>
<div class="t n" style="left:27px;top:210px;width:90px;height:18px;line-height:18px;">192.168</div>
<div class="t" style="left:168px;top:210px;width:60px;height:18px;line-height:18px;">51956</div>
<div class="t" style="left:248px;top:210px;width:60px;height:18px;line-height:18px;">Local</div>
<svg style="left:398px;top:212px" width="15" height="15" viewBox="0 0 15 15"><rect x="1" y="1" width="13" height="9" rx="1" fill="#3f86d2" stroke="#3a64a0"/><path d="M3 3l4.500 3.500 4.500-3.500v-.500h-9z" fill="#a9d6f8"/><rect x="1.500" y="11" width="12" height="3.500" fill="#8a94a6" stroke="#6a7488" stroke-width=".600"/><rect x="3" y="12" width="9" height="1.200" fill="#e4e8ee"/></svg>
<div class="t n" style="left:419px;top:210px;width:90px;height:18px;line-height:18px;">192.16</div>
<div class="t" style="left:557px;top:210px;width:40px;height:18px;line-height:18px;">53</div>
<div class="t" style="left:638px;top:210px;width:60px;height:18px;line-height:18px;">Local</div>
<div class="t r n" style="left:780px;top:210px;width:131px;height:18px;line-height:18px;">00:00:00.006187000</div>
<div class="t r n" style="left:913px;top:210px;width:96px;height:18px;line-height:18px;">516.00 B</div>
<div class="t r n" style="left:1014px;top:210px;width:96px;height:18px;line-height:18px;">86.00 B</div>
<div class="t r n" style="left:1114px;top:210px;width:96px;height:18px;line-height:18px;">430.00 B</div>
<div class="t r n" style="left:1214px;top:210px;width:96px;height:18px;line-height:18px;">432.00 B</div>
<div class="t r n" style="left:1314px;top:210px;width:96px;height:18px;line-height:18px;">44.00 B</div>
<div class="t r n" style="left:1414px;top:210px;width:96px;height:18px;line-height:18px;">388.00 B</div>
<div class="t r" style="left:1514px;top:210px;width:96px;height:18px;line-height:18px;">2</div>
<div class="row" style="left:0px;top:229px;width:1644px;height:19px;"></div>
<svg style="left:7px;top:231px" width="15" height="15" viewBox="0 0 15 15"><rect x="1" y="1" width="13" height="9" rx="1" fill="#3f86d2" stroke="#3a64a0"/><path d="M3 3l4.500 3.500 4.500-3.500v-.500h-9z" fill="#a9d6f8"/><rect x="1.500" y="11" width="12" height="3.500" fill="#8a94a6" stroke="#6a7488" stroke-width=".600"/><rect x="3" y="12" width="9" height="1.200" fill="#e4e8ee"/></svg>
<div class="t n" style="left:27px;top:229px;width:90px;height:18px;line-height:18px;">192.168</div>
<div class="t" style="left:168px;top:229px;width:60px;height:18px;line-height:18px;">64241</div>
<div class="t" style="left:248px;top:229px;width:60px;height:18px;line-height:18px;">Local</div>
<svg style="left:398px;top:231px" width="15" height="15" viewBox="0 0 15 15"><rect x="1" y="1" width="13" height="9" rx="1" fill="#3f86d2" stroke="#3a64a0"/><path d="M3 3l4.500 3.500 4.500-3.500v-.500h-9z" fill="#a9d6f8"/><rect x="1.500" y="11" width="12" height="3.500" fill="#8a94a6" stroke="#6a7488" stroke-width=".600"/><rect x="3" y="12" width="9" height="1.200" fill="#e4e8ee"/></svg>
<div class="t n" style="left:419px;top:229px;width:90px;height:18px;line-height:18px;">192.16</div>
<div class="t" style="left:557px;top:229px;width:40px;height:18px;line-height:18px;">53</div>
<div class="t" style="left:638px;top:229px;width:60px;height:18px;line-height:18px;">Local</div>
<div class="t r n" style="left:780px;top:229px;width:131px;height:18px;line-height:18px;">00:00:00.103895000</div>
<div class="t r n" style="left:913px;top:229px;width:96px;height:18px;line-height:18px;">442.00 B</div>
<div class="t r n" style="left:1014px;top:229px;width:96px;height:18px;line-height:18px;">158.00 B</div>
<div class="t r n" style="left:1114px;top:229px;width:96px;height:18px;line-height:18px;">284.00 B</div>
<div class="t r n" style="left:1214px;top:229px;width:96px;height:18px;line-height:18px;">316.00 B</div>
<div class="t r n" style="left:1314px;top:229px;width:96px;height:18px;line-height:18px;">74.00 B</div>
<div class="t r n" style="left:1414px;top:229px;width:96px;height:18px;line-height:18px;">242.00 B</div>
<div class="t r" style="left:1514px;top:229px;width:96px;height:18px;line-height:18px;">3</div>
<div class="row" style="left:0px;top:248px;width:1644px;height:19px;"></div>
<svg style="left:7px;top:250px" width="15" height="15" viewBox="0 0 15 15"><rect x="1" y="1" width="13" height="9" rx="1" fill="#3f86d2" stroke="#3a64a0"/><path d="M3 3l4.500 3.500 4.500-3.500v-.500h-9z" fill="#a9d6f8"/><rect x="1.500" y="11" width="12" height="3.500" fill="#8a94a6" stroke="#6a7488" stroke-width=".600"/><rect x="3" y="12" width="9" height="1.200" fill="#e4e8ee"/></svg>
<div class="t n" style="left:27px;top:248px;width:90px;height:18px;line-height:18px;">192.168</div>
<div class="t" style="left:168px;top:248px;width:60px;height:18px;line-height:18px;">61281</div>
<div class="t" style="left:248px;top:248px;width:60px;height:18px;line-height:18px;">Local</div>
<svg style="left:398px;top:250px" width="15" height="15" viewBox="0 0 15 15"><rect x="1" y="1" width="13" height="9" rx="1" fill="#3f86d2" stroke="#3a64a0"/><path d="M3 3l4.500 3.500 4.500-3.500v-.500h-9z" fill="#a9d6f8"/><rect x="1.500" y="11" width="12" height="3.500" fill="#8a94a6" stroke="#6a7488" stroke-width=".600"/><rect x="3" y="12" width="9" height="1.200" fill="#e4e8ee"/></svg>
<div class="t n" style="left:419px;top:248px;width:90px;height:18px;line-height:18px;">192.16</div>
<div class="t" style="left:557px;top:248px;width:40px;height:18px;line-height:18px;">53</div>
<div class="t" style="left:638px;top:248px;width:60px;height:18px;line-height:18px;">Local</div>
<div class="t r n" style="left:780px;top:248px;width:131px;height:18px;line-height:18px;">00:00:00.041689000</div>
<div class="t r n" style="left:913px;top:248px;width:96px;height:18px;line-height:18px;">445.00 B</div>
<div class="t r n" style="left:1014px;top:248px;width:96px;height:18px;line-height:18px;">160.00 B</div>
<div class="t r n" style="left:1114px;top:248px;width:96px;height:18px;line-height:18px;">285.00 B</div>
<div class="t r n" style="left:1214px;top:248px;width:96px;height:18px;line-height:18px;">319.00 B</div>
<div class="t r n" style="left:1314px;top:248px;width:96px;height:18px;line-height:18px;">76.00 B</div>
<div class="t r n" style="left:1414px;top:248px;width:96px;height:18px;line-height:18px;">243.00 B</div>
<div class="t r" style="left:1514px;top:248px;width:96px;height:18px;line-height:18px;">3</div>
<div class="row" style="left:0px;top:267px;width:1644px;height:19px;"></div>
<svg style="left:7px;top:269px" width="15" height="15" viewBox="0 0 15 15"><rect x="1" y="1" width="13" height="9" rx="1" fill="#3f86d2" stroke="#3a64a0"/><path d="M3 3l4.500 3.500 4.500-3.500v-.500h-9z" fill="#a9d6f8"/><rect x="1.500" y="11" width="12" height="3.500" fill="#8a94a6" stroke="#6a7488" stroke-width=".600"/><rect x="3" y="12" width="9" height="1.200" fill="#e4e8ee"/></svg>
<div class="t n" style="left:27px;top:267px;width:90px;height:18px;line-height:18px;">192.168</div>
<div class="t" style="left:168px;top:267px;width:60px;height:18px;line-height:18px;">50432</div>
<div class="t" style="left:248px;top:267px;width:60px;height:18px;line-height:18px;">Local</div>
<svg style="left:398px;top:269px" width="15" height="15" viewBox="0 0 15 15"><rect x="1" y="1" width="13" height="9" rx="1" fill="#3f86d2" stroke="#3a64a0"/><path d="M3 3l4.500 3.500 4.500-3.500v-.500h-9z" fill="#a9d6f8"/><rect x="1.500" y="11" width="12" height="3.500" fill="#8a94a6" stroke="#6a7488" stroke-width=".600"/><rect x="3" y="12" width="9" height="1.200" fill="#e4e8ee"/></svg>
<div class="t n" style="left:419px;top:267px;width:90px;height:18px;line-height:18px;">192.16</div>
<div class="t" style="left:557px;top:267px;width:40px;height:18px;line-height:18px;">53</div>
<div class="t" style="left:638px;top:267px;width:60px;height:18px;line-height:18px;">Local</div>
<div class="t r n" style="left:780px;top:267px;width:131px;height:18px;line-height:18px;">00:00:00.078069000</div>
<div class="t r n" style="left:913px;top:267px;width:96px;height:18px;line-height:18px;">394.00 B</div>
<div class="t r n" style="left:1014px;top:267px;width:96px;height:18px;line-height:18px;">178.00 B</div>
<div class="t r n" style="left:1114px;top:267px;width:96px;height:18px;line-height:18px;">216.00 B</div>
<div class="t r n" style="left:1214px;top:267px;width:96px;height:18px;line-height:18px;">268.00 B</div>
<div class="t r n" style="left:1314px;top:267px;width:96px;height:18px;line-height:18px;">94.00 B</div>
<div class="t r n" style="left:1414px;top:267px;width:96px;height:18px;line-height:18px;">174.00 B</div>
<div class="t r" style="left:1514px;top:267px;width:96px;height:18px;line-height:18px;">3</div>
<div class="row" style="left:0px;top:286px;width:1644px;height:19px;"></div>
<svg style="left:7px;top:288px" width="15" height="15" viewBox="0 0 15 15"><rect x="1" y="1" width="13" height="9" rx="1" fill="#3f86d2" stroke="#3a64a0"/><path d="M3 3l4.500 3.500 4.500-3.500v-.500h-9z" fill="#a9d6f8"/><rect x="1.500" y="11" width="12" height="3.500" fill="#8a94a6" stroke="#6a7488" stroke-width=".600"/><rect x="3" y="12" width="9" height="1.200" fill="#e4e8ee"/></svg>
<div class="t n" style="left:27px;top:286px;width:90px;height:18px;line-height:18px;">192.168</div>
<div class="t" style="left:168px;top:286px;width:60px;height:18px;line-height:18px;">57251</div>
<div class="t" style="left:248px;top:286px;width:60px;height:18px;line-height:18px;">Local</div>
<svg style="left:398px;top:288px" width="15" height="15" viewBox="0 0 15 15"><rect x="1" y="1" width="13" height="9" rx="1" fill="#3f86d2" stroke="#3a64a0"/><path d="M3 3l4.500 3.500 4.500-3.500v-.500h-9z" fill="#a9d6f8"/><rect x="1.500" y="11" width="12" height="3.500" fill="#8a94a6" stroke="#6a7488" stroke-width=".600"/><rect x="3" y="12" width="9" height="1.200" fill="#e4e8ee"/></svg>
<div class="t n" style="left:419px;top:286px;width:90px;height:18px;line-height:18px;">192.16</div>
<div class="t" style="left:557px;top:286px;width:40px;height:18px;line-height:18px;">53</div>
<div class="t" style="left:638px;top:286px;width:60px;height:18px;line-height:18px;">Local</div>
<div class="t r n" style="left:780px;top:286px;width:131px;height:18px;line-height:18px;">00:00:00.049220000</div>
<div class="t r n" style="left:913px;top:286px;width:96px;height:18px;line-height:18px;">373.00 B</div>
<div class="t r n" style="left:1014px;top:286px;width:96px;height:18px;line-height:18px;">200.00 B</div>
<div class="t r n" style="left:1114px;top:286px;width:96px;height:18px;line-height:18px;">173.00 B</div>
<div class="t r n" style="left:1214px;top:286px;width:96px;height:18px;line-height:18px;">247.00 B</div>
<div class="t r n" style="left:1314px;top:286px;width:96px;height:18px;line-height:18px;">116.00 B</div>
<div class="t r n" style="left:1414px;top:286px;width:96px;height:18px;line-height:18px;">131.00 B</div>
<div class="t r" style="left:1514px;top:286px;width:96px;height:18px;line-height:18px;">3</div>
<div class="row" style="left:0px;top:305px;width:1644px;height:19px;"></div>
<svg style="left:7px;top:307px" width="15" height="15" viewBox="0 0 15 15"><rect x="1" y="1" width="13" height="9" rx="1" fill="#3f86d2" stroke="#3a64a0"/><path d="M3 3l4.500 3.500 4.500-3.500v-.500h-9z" fill="#a9d6f8"/><rect x="1.500" y="11" width="12" height="3.500" fill="#8a94a6" stroke="#6a7488" stroke-width=".600"/><rect x="3" y="12" width="9" height="1.200" fill="#e4e8ee"/></svg>
<div class="t n" style="left:27px;top:305px;width:90px;height:18px;line-height:18px;">192.168.2.121</div>
<div class="t" style="left:168px;top:305px;width:60px;height:18px;line-height:18px;">53775</div>
<div class="t" style="left:248px;top:305px;width:60px;height:18px;line-height:18px;">Local</div>
<svg style="left:398px;top:307px" width="15" height="15" viewBox="0 0 15 15"><rect x="1" y="1" width="13" height="9" rx="1" fill="#3f86d2" stroke="#3a64a0"/><path d="M3 3l4.500 3.500 4.500-3.500v-.500h-9z" fill="#a9d6f8"/><rect x="1.500" y="11" width="12" height="3.500" fill="#8a94a6" stroke="#6a7488" stroke-width=".600"/><rect x="3" y="12" width="9" height="1.200" fill="#e4e8ee"/></svg>
<div class="t n" style="left:419px;top:305px;width:90px;height:18px;line-height:18px;">192.168.2.1</div>
<div class="t" style="left:557px;top:305px;width:40px;height:18px;line-height:18px;">53</div>
<div class="t" style="left:638px;top:305px;width:60px;height:18px;line-height:18px;">Local</div>
<div class="t r n" style="left:780px;top:305px;width:131px;height:18px;line-height:18px;">00:00:00.009257000</div>
<div class="t r n" style="left:913px;top:305px;width:96px;height:18px;line-height:18px;">584.00 B</div>
<div class="t r n" style="left:1014px;top:305px;width:96px;height:18px;line-height:18px;">89.00 B</div>
<div class="t r n" style="left:1114px;top:305px;width:96px;height:18px;line-height:18px;">505.00 B</div>
<div class="t r n" style="left:1214px;top:305px;width:96px;height:18px;line-height:18px;">510.00 B</div>
<div class="t r n" style="left:1314px;top:305px;width:96px;height:18px;line-height:18px;">47.00 B</div>
<div class="t r n" style="left:1414px;top:305px;width:96px;height:18px;line-height:18px;">463.00 B</div>
<div class="t r" style="left:1514px;top:305px;width:96px;height:18px;line-height:18px;">2</div>
<div style="left:66px;top:4px;width:46px;height:49px;background:#c3cee3;"></div>
<div style="left:66px;top:53px;width:46px;height:252px;background:#e6e8ec;"></div>
<div style="left:453px;top:4px;width:30px;height:49px;background:#c3cee3;"></div>
<div style="left:453px;top:53px;width:30px;height:252px;background:#e6e8ec;"></div>
<div style="left:163px;top:0px;width:1px;height:330px;background:#dadfe8;"></div>
<div style="left:243px;top:0px;width:1px;height:330px;background:#dadfe8;"></div>
<div style="left:394px;top:0px;width:1px;height:330px;background:#dadfe8;"></div>
<div style="left:549px;top:0px;width:1px;height:330px;background:#dadfe8;"></div>
<div style="left:629px;top:0px;width:1px;height:330px;background:#dadfe8;"></div>
<div style="left:781px;top:0px;width:1px;height:330px;background:#dadfe8;"></div>
<div style="left:916px;top:0px;width:1px;height:330px;background:#dadfe8;"></div>
<div style="left:1017px;top:0px;width:1px;height:330px;background:#dadfe8;"></div>
<div style="left:1117px;top:0px;width:1px;height:330px;background:#dadfe8;"></div>
<div style="left:1217px;top:0px;width:1px;height:330px;background:#dadfe8;"></div>
<div style="left:1317px;top:0px;width:1px;height:330px;background:#dadfe8;"></div>
<div style="left:1417px;top:0px;width:1px;height:330px;background:#dadfe8;"></div>
<div style="left:1517px;top:0px;width:1px;height:330px;background:#dadfe8;"></div>
<div style="left:1617px;top:0px;width:1px;height:330px;background:#dadfe8;"></div>
</div>
<div class="sb" style="left:1893px;top:655px;width:15px;height:337px;"></div>
<div class="th" style="left:1894px;top:679px;width:13px;height:178px;"></div>
<svg style="left:1895px;top:662px" width="11" height="8" viewBox="0 0 11 8"><path d="M1.500 6.500l4-4.500 4 4.500" stroke="#444" stroke-width="1.600" fill="none"/></svg>
<svg style="left:1895px;top:978px" width="11" height="8" viewBox="0 0 11 8"><path d="M1.500 1.500l4 4.500 4-4.500" stroke="#444" stroke-width="1.600" fill="none"/></svg>
<div class="sb" style="left:252px;top:992px;width:1656px;height:16px;"></div>
<div class="th" style="left:272px;top:993px;width:1008px;height:14px;"></div>
<svg style="left:258px;top:994px" width="8" height="11" viewBox="0 0 8 11"><path d="M6.500 1.500l-4.500 4 4.500 4" stroke="#444" stroke-width="1.600" fill="none"/></svg>
<svg style="left:1880px;top:994px" width="8" height="11" viewBox="0 0 8 11"><path d="M1.500 1.500l4.500 4-4.500 4" stroke="#444" stroke-width="1.600" fill="none"/></svg>
<div style="left:1908px;top:655px;width:4px;height:354px;background:#fff;"></div>
<div style="left:242px;top:1007px;width:1678px;height:13px;background:linear-gradient(#e0b8a0 0,#e0b8a0 8%,#8aa0c8 12%,#8aa0c8 24%,#b8a888 28%,#b8a888 36%,#4a7cc8 40%);"></div>
<div style="left:0px;top:1013px;width:243px;height:7px;background:#4a7cc8;"></div>
<div style="left:1910px;top:600px;width:10px;height:410px;background:linear-gradient(90deg,#d8c0a0 0,#d8c0a0 12%,#5a88d0 16%,#5a88d0 42%,#c0a888 46%,#c0a888 56%,#4a7cc8 60%);"></div>
<!-- status bar -->
<div style="left:0px;top:1020px;width:1920px;height:18px;background:linear-gradient(#e6effc 0,#cfe2fb 20%,#bdd6f9 60%,#b4d0f7);"></div>
<svg style="left:8px;top:1019px" width="18" height="17" viewBox="0 0 18 17"><rect x="2" y="2" width="11" height="12" fill="#f4f6fa" stroke="#8c99b0"/><path d="M8 8l8 0-3-3M16 8l-3 3" stroke="#d8a020" stroke-width="2" fill="none"/></svg>
<div class="t st" style="left:26px;top:1018px;width:300px;height:20px;line-height:20px;">Replay - Full Traffic Decoding</div>
<div style="left:187px;top:1020px;width:1px;height:16px;background:#8fb0e0;border-right:1px solid #e8f0fb;width:2px;"></div>
<svg style="left:196px;top:1019px" width="20" height="17" viewBox="0 0 20 17"><rect x="2" y="6" width="14" height="8" rx="1" fill="#d8dde6" stroke="#7d8797"/><path d="M5 6l3-4h8l-3 4" fill="#f4f6fa" stroke="#7d8797"/><circle cx="13" cy="10" r="1.500" fill="#3a8a3a"/></svg>
<div class="t st" style="left:219px;top:1018px;width:300px;height:20px;line-height:20px;">Network Profile 1 - Bandwidth - 1000Mbps</div>
<div style="left:451px;top:1020px;width:2px;height:16px;background:#8fb0e0;border-right:1px solid #e8f0fb;"></div>
<svg style="left:458px;top:1020px" width="18" height="15" viewBox="0 0 18 15"><path d="M1.500 3.500h5l1.500 2h8v8h-14.500z" fill="#f2c84b" stroke="#c79a22"/></svg>
<div class="t st" style="left:479px;top:1018px;width:300px;height:20px;line-height:20px;">Total 1 files, replay stopped</div>
<div style="left:630px;top:1020px;width:2px;height:16px;background:#8fb0e0;border-right:1px solid #e8f0fb;"></div>
<svg style="left:640px;top:1019px" width="16" height="17" viewBox="0 0 16 17"><path d="M3 2h10l-4 6v7l-2 1v-8z" fill="#c8ccd4" stroke="#7d838d"/></svg>
<div class="t st" style="left:658px;top:1018px;width:300px;height:20px;line-height:20px;">Inactive : 00:00:01</div>
<svg style="left:767px;top:1019px" width="18" height="17" viewBox="0 0 18 17"><path d="M2 3l6 9M14 1l-6 12" stroke="#2a8a3a" stroke-width="2" fill="none"/><circle cx="11" cy="12" r="3" fill="#d8a020"/></svg>
<div class="t st" style="left:786px;top:1018px;width:300px;height:20px;line-height:20px;">6,851</div>
<svg style="left:822px;top:1019px" width="18" height="17" viewBox="0 0 18 17"><path d="M2 3l6 9M14 1l-6 12" stroke="#c0392b" stroke-width="2" fill="none"/><circle cx="11" cy="12" r="3" fill="#e04030"/></svg>
<div class="t st" style="left:842px;top:1018px;width:300px;height:20px;line-height:20px;">0</div>
<div class="t st" style="left:860px;top:1018px;width:300px;height:20px;line-height:20px;">Ready</div>
<svg style="left:1663px;top:1019px" width="18" height="17" viewBox="0 0 18 17"><path d="M9 1.500l8 14h-16z" fill="#ffd92e" stroke="#b8960c"/><rect x="8.200" y="6" width="1.800" height="5.500" fill="#222"/><circle cx="9.100" cy="13.200" r="1.100" fill="#222"/></svg>
<div class="t st" style="left:1683px;top:1018px;width:300px;height:20px;line-height:20px;">Alarm Explorer</div>
<div style="left:1765px;top:1020px;width:2px;height:16px;background:#8fb0e0;border-right:1px solid #e8f0fb;"></div>
<svg style="left:1771px;top:1020px" width="16" height="16" viewBox="0 0 16 16"><circle cx="8" cy="8" r="5.800" fill="#f5a81a" stroke="#d08a10" stroke-width=".800"/><circle cx="6.500" cy="6" r="2.200" fill="#fcd680"/></svg>
<div class="t st" style="left:1792px;top:1018px;width:300px;height:20px;line-height:20px;">0</div>
<svg style="left:1820px;top:1020px" width="16" height="16" viewBox="0 0 16 16"><circle cx="8" cy="8" r="5.800" fill="#f5a81a" stroke="#d08a10" stroke-width=".800"/><circle cx="6.500" cy="6" r="2.200" fill="#fcd680"/></svg>
<div class="t st" style="left:1841px;top:1018px;width:300px;height:20px;line-height:20px;">0</div>
<svg style="left:1870px;top:1020px" width="16" height="16" viewBox="0 0 16 16"><circle cx="8" cy="8" r="5.800" fill="#f5a81a" stroke="#d08a10" stroke-width=".800"/><circle cx="6.500" cy="6" r="2.200" fill="#fcd680"/></svg>
<div class="t st" style="left:1891px;top:1018px;width:300px;height:20px;line-height:20px;">0</div>
</div>
</body></html>
